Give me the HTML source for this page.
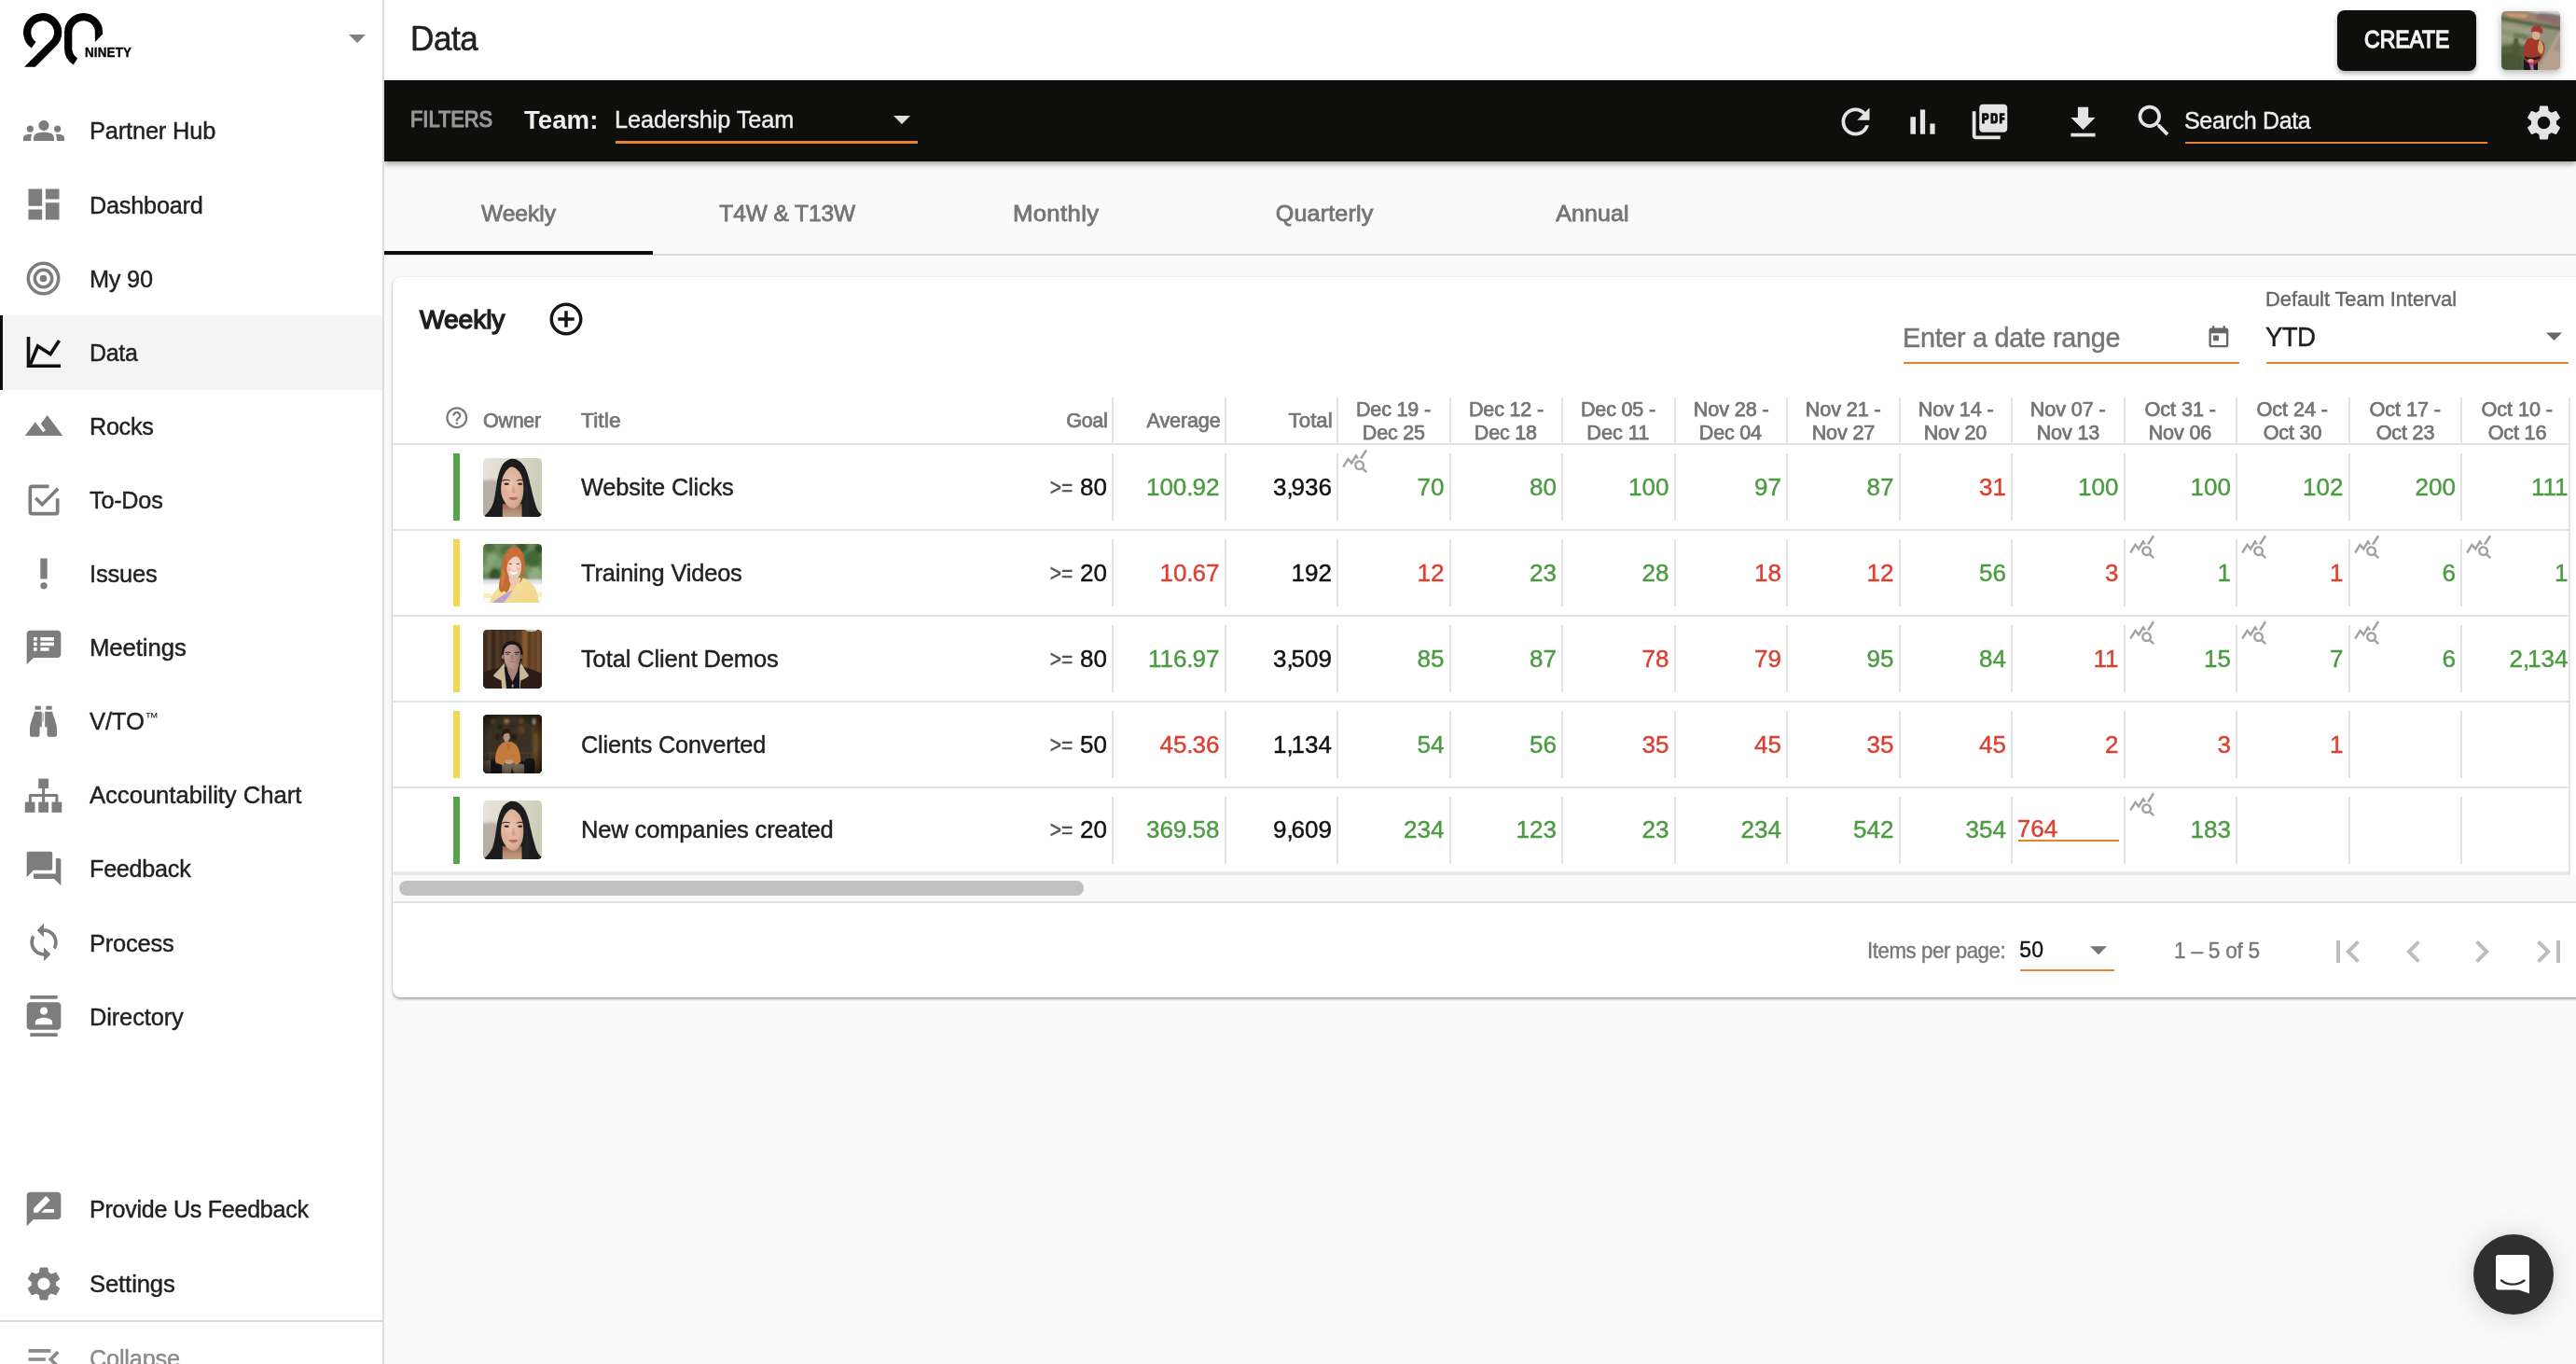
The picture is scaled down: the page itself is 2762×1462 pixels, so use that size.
<!DOCTYPE html>
<html><head><meta charset="utf-8"><title>Data</title><style>
html,body{margin:0;padding:0}
html{overflow:hidden;background:#fafafa}
body{width:2762px;height:1462px;overflow:hidden;background:#fafafa;position:relative;font-family:"Liberation Sans",sans-serif;}
.b,.t,.ic{position:absolute;display:block}
.t{white-space:nowrap;overflow:visible;will-change:opacity;opacity:.999}
</style></head>
<body>
<div class="b" style="left:412px;top:0px;width:2350px;height:86px;background:#fff;"></div>
<div class="b" style="left:412px;top:173px;width:2350px;height:100px;background:#fafafa;"></div>
<div class="b" style="left:412px;top:271.5px;width:2350px;height:2px;background:#dcdcdc;"></div>
<div class="b" style="left:412px;top:269px;width:288px;height:4px;background:#0e0e0e;"></div>
<div class="b" style="left:412px;top:86px;width:2350px;height:87px;background:#0e0e0d;box-shadow:0 3px 6px rgba(0,0,0,.35);"></div>
<div class="t " style="top:17.99px;height:47px;line-height:47px;font-size:36px;color:#212121;-webkit-text-stroke:0.58px;left:440.38px;"><span style="letter-spacing: -0.379px; display: inline-block; transform: scaleX(0.9718); transform-origin: 0% 50%;">Data</span></div>
<div class="b" style="left:2506px;top:11px;width:149px;height:64.5px;background:#0e0e0d;border-radius:8px;box-shadow:0 3px 5px rgba(0,0,0,.3);"></div>
<div class="t " style="top:25.28px;height:34px;line-height:34px;font-size:26px;color:#f4f4f4;-webkit-text-stroke:1.30px #f4f4f4;left:2281.00px;width:600px;text-align:center;"><span style="letter-spacing: 0px; display: inline-block; transform: scaleX(0.8819); transform-origin: 50% 50%;">CREATE</span></div>
<svg class="ic" style="left:2682px;top:12.4px;width:63px;height:63px;filter:drop-shadow(0 3px 4px rgba(0,0,0,.3));" viewBox="0 0 100 100"><defs><clipPath id="cpuser268212"><rect width="100" height="100" rx="8"></rect></clipPath><filter id="b0user268212" x="-30%" y="-30%" width="160%" height="160%"><feGaussianBlur stdDeviation="0.7"></feGaussianBlur></filter><filter id="b1user268212" x="-30%" y="-30%" width="160%" height="160%"><feGaussianBlur stdDeviation="1.3"></feGaussianBlur></filter><filter id="b2user268212" x="-30%" y="-30%" width="160%" height="160%"><feGaussianBlur stdDeviation="2.6"></feGaussianBlur></filter><filter id="b3user268212" x="-30%" y="-30%" width="160%" height="160%"><feGaussianBlur stdDeviation="4.5"></feGaussianBlur></filter></defs><g clip-path="url(#cpuser268212)"><rect width="100" height="100" fill="#8f9478"></rect><g filter="url(#b1user268212)"><path d="M38 -2 L102 -2 L102 8 L70 5Z" fill="#cddaeb"></path><path d="M-2 1 C20 -1 40 0 60 3 C72 1 88 3 102 7 L102 26 C80 24 60 20 40 17 C24 14 10 10 -2 8Z" fill="#9c8270"></path><path d="M4 3 L46 5 L40 11 L16 10Z" fill="#c9a06c"></path><path d="M60 5 C74 3 90 6 102 9 L102 24 C88 22 74 18 60 14Z" fill="#86706c"></path><path d="M-2 8 C30 14 60 21 102 26 L102 33 C70 28 30 21 -2 15Z" fill="#5a684c"></path><path d="M-2 22 C20 24 40 30 60 32 L60 40 C40 38 20 32 -2 30Z" fill="#a2a386" opacity=".8"></path><path d="M20 38 C30 36 40 38 48 44 L40 50 C32 46 26 44 20 44Z" fill="#6e7a58"></path><path d="M-2 40 C20 42 40 48 52 54 L52 60 C36 54 18 50 -2 48Z" fill="#a0a286" opacity=".7"></path></g><g filter="url(#b2user268212)"><path d="M-2 60 C14 54 30 55 42 60 L46 102 L-2 102Z" fill="#54613e"></path><path d="M-2 76 C10 70 24 72 36 78 L36 102 L-2 102Z" fill="#4a5636"></path></g><g filter="url(#b1user268212)"><path d="M22 45 L28 45 L30 60 L34 72 L28 70 L28 102 L22 102 L22 70 L16 74 L20 60Z" fill="#4c5836"></path><path d="M102 32 C94 40 86 54 80 68 C72 82 64 92 60 102 L102 102Z" fill="#b8a08f"></path><path d="M102 40 C96 50 92 58 88 66 L102 70Z" fill="#a89080"></path></g><g filter="url(#b0user268212)"><path d="M38 82 L62 80 L62 101 L38 101Z" fill="#16161b"></path><path d="M46 46 C40 52 37 62 38 72 C38 78 40 84 42 86 L50 90 L58 90 L66 84 C72 76 76 64 73 56 C70 48 54 44 46 46Z" fill="#a3382a"></path><path d="M40 76 C46 80 56 80 66 76 L66 80 C56 84 46 84 40 80Z" fill="#1a1a1e"></path><path d="M65 49 C72 54 73 64 70 72 C66 74 62 70 62 64 C62 58 63 53 65 49Z" fill="#c9a56c"></path><ellipse cx="59" cy="41" rx="6.800" ry="8" fill="#dbab92"></ellipse><path d="M50.500 34 C51 26 58 23 64 25 C69 27 71 32 70 37 C68 39 66 37 64 36 C60 34 55 34 51 36Z" fill="#a0383c"></path><path d="M46 84 L50 101 L56 101 L54 84Z" fill="#c43890"></path><path d="M50 92 L52 101 L54 101 L53 92Z" fill="#58b070"></path><ellipse cx="50" cy="84" rx="5" ry="3" fill="#d4a288"></ellipse></g></g></svg>
<div class="t " style="top:113.39px;height:31px;line-height:31px;font-size:23.5px;color:#9a9a9a;-webkit-text-stroke:1.18px #9a9a9a;left:440.44px;"><span style="letter-spacing: 0px; display: inline-block; transform: scaleX(0.9292); transform-origin: 0% 50%;">FILTERS</span></div>
<div class="t " style="top:110.85px;height:36px;line-height:36px;font-size:27.5px;color:#efefef;font-weight:700;left:562.06px;"><span style="letter-spacing: 0.036px; display: inline-block; transform: scaleX(1.0033); transform-origin: 0% 50%;">Team:</span></div>
<div class="t " style="top:111.92px;height:33px;line-height:33px;font-size:25.5px;color:#efefef;-webkit-text-stroke:0.41px;left:658.85px;"><span style="letter-spacing: -0.072px; display: inline-block; transform: scaleX(0.9903); transform-origin: 0% 50%;">Leadership Team</span></div>
<div class="b" style="left:660px;top:151.2px;width:324px;height:2.6px;background:#e8832b;"></div>
<svg class="ic" style="left:957.5px;top:123.800px;width:18px;height:9.200px" viewBox="0 0 18 9"><path d="M0 0H18L9 9Z" fill="#ddd"></path></svg>
<svg class="ic" style="left:1966.9px;top:107.69999999999999px;width:45px;height:45px" viewBox="0 0 24 24"><path fill="#e4e4e4" d="M17.65 6.35C16.2 4.9 14.21 4 12 4c-4.42 0-7.99 3.58-7.99 8s3.57 8 7.99 8c3.73 0 6.84-2.55 7.73-6h-2.08c-.82 2.33-3.04 4-5.65 4-3.31 0-6-2.69-6-6s2.690-6 6-6c1.66 0 3.14.69 4.22 1.78L13 11h7V4l-2.35 2.35z"></path></svg>
<svg class="ic" style="left:2038.9px;top:107.69999999999999px;width:45px;height:45px" viewBox="0 0 24 24"><path fill="#e4e4e4" d="M5 9.2h3V19H5zM10.6 5h2.8v14h-2.8zm5.6 8H19v6h-2.8z"></path></svg>
<svg class="ic" style="left:2110.9px;top:108.4px;width:45px;height:45px" viewBox="0 0 24 24"><path fill="#e4e4e4" d="M20 2H8c-1.1 0-2 .9-2 2v12c0 1.1.9 2 2 2h12c1.1 0 2-.9 2-2V4c0-1.1-.9-2-2-2zm-8.5 7.500c0 .83-.67 1.5-1.5 1.5H9v2H7.5V7H10c.83 0 1.5.67 1.5 1.5v1zm5 2c0 .83-.67 1.5-1.5 1.5h-2.5V7H15c.83 0 1.5.67 1.5 1.5v3zm4-3H19v1h1.5V11H19v2h-1.5V7h3v1.5zM9 9.500h1v-1H9v1zM4 6H2v14c0 1.1.9 2 2 2h14v-2H4V6zm10 5.500h1v-3h-1v3z"></path></svg>
<svg class="ic" style="left:2211.3px;top:108.8px;width:45px;height:45px" viewBox="0 0 24 24"><path fill="#e4e4e4" d="M19 9h-4V3H9v6H5l7 7 7-7zM5 18v2h14v-2H5z"></path></svg>
<svg class="ic" style="left:2287.4px;top:107.39999999999999px;width:45px;height:45px" viewBox="0 0 24 24"><path fill="#e4e4e4" d="M15.5 14h-.79l-.28-.27C15.41 12.59 16 11.11 16 9.500 16 5.910 13.090 3 9.500 3S3 5.910 3 9.500 5.910 16 9.500 16c1.61 0 3.09-.59 4.23-1.57l.27.28v.79l5 4.990L20.490 19l-4.990-5zm-6 0C7.010 14 5 11.990 5 9.500S7.010 5 9.500 5 14 7.010 14 9.500 11.990 14 9.500 14z"></path></svg>
<svg class="ic" style="left:2705.3px;top:108.69999999999999px;width:45px;height:45px" viewBox="0 0 24 24"><path fill="#e4e4e4" d="M19.14 12.94c.04-.3.06-.61.06-.94 0-.32-.02-.64-.07-.94l2.03-1.58c.18-.14.23-.41.12-.61l-1.92-3.32c-.12-.22-.37-.29-.59-.22l-2.39.96c-.5-.38-1.03-.7-1.62-.94l-.36-2.54c-.04-.24-.24-.41-.48-.41h-3.84c-.24 0-.43.17-.47.41l-.36 2.54c-.59.24-1.13.57-1.62.94l-2.39-.96c-.22-.08-.47 0-.59.22L2.74 8.87c-.12.21-.08.47.12.61l2.03 1.58c-.05.3-.09.63-.09.94s.02.64.07.94l-2.03 1.58c-.18.14-.23.41-.12.61l1.92 3.32c.12.22.37.29.59.22l2.39-.96c.5.38 1.03.7 1.62.94l.36 2.54c.05.24.24.41.48.41h3.84c.24 0 .44-.17.47-.41l.36-2.54c.59-.24 1.13-.56 1.62-.94l2.39.96c.22.08.47 0 .59-.22l1.92-3.32c.12-.22.07-.47-.12-.61l-2.01-1.58zM12 15.6c-1.98 0-3.6-1.62-3.6-3.6s1.62-3.6 3.6-3.6 3.6 1.62 3.6 3.6-1.62 3.6-3.6 3.6z"></path></svg>
<div class="t " style="top:112.24px;height:34px;line-height:34px;font-size:26.5px;color:#efefef;-webkit-text-stroke:0.42px;left:2342.21px;"><span style="letter-spacing: -0.402px; display: inline-block; transform: scaleX(0.9479); transform-origin: 0% 50%;">Search Data</span></div>
<div class="b" style="left:2343.4px;top:152.3px;width:323.6px;height:2.2px;background:#e8832b;"></div>
<div class="t " style="top:213.15px;height:32px;line-height:32px;font-size:24.5px;color:#757575;-webkit-text-stroke:0.83px #757575;left:256.00px;width:600px;text-align:center;"><span style="letter-spacing: 0.023px; display: inline-block; transform: scaleX(1.0027); transform-origin: 50% 50%;">Weekly</span></div>
<div class="t " style="top:213.15px;height:32px;line-height:32px;font-size:24.5px;color:#757575;-webkit-text-stroke:0.83px #757575;left:544.00px;width:600px;text-align:center;"><span style="letter-spacing: -0.033px; display: inline-block; transform: scaleX(0.9962); transform-origin: 50% 50%;">T4W &amp; T13W</span></div>
<div class="t " style="top:213.15px;height:32px;line-height:32px;font-size:24.5px;color:#757575;-webkit-text-stroke:0.83px #757575;left:832.00px;width:600px;text-align:center;"><span style="letter-spacing: 0.375px; display: inline-block; transform: scaleX(1.0475); transform-origin: 50% 50%;">Monthly</span></div>
<div class="t " style="top:213.15px;height:32px;line-height:32px;font-size:24.5px;color:#757575;-webkit-text-stroke:0.83px #757575;left:1120.00px;width:600px;text-align:center;"><span style="letter-spacing: 0.162px; display: inline-block; transform: scaleX(1.0236); transform-origin: 50% 50%;">Quarterly</span></div>
<div class="t " style="top:213.15px;height:32px;line-height:32px;font-size:24.5px;color:#757575;-webkit-text-stroke:0.83px #757575;left:1407.75px;width:600px;text-align:center;"><span style="letter-spacing: 0.135px; display: inline-block; transform: scaleX(1.0163); transform-origin: 50% 50%;">Annual</span></div>
<div class="b" style="left:421px;top:296.7px;width:2360px;height:772.3px;background:#fff;border-radius:8px;box-shadow:0 2px 3px rgba(0,0,0,.32),0 0 2px rgba(0,0,0,.12);"></div>
<div class="t " style="top:323.77px;height:37px;line-height:37px;font-size:28.5px;color:#1f1f1f;-webkit-text-stroke:1.43px #1f1f1f;left:450.02px;"><span style="letter-spacing: -0.105px; display: inline-block; transform: scaleX(0.9895); transform-origin: 0% 50%;">Weekly</span></div>
<svg class="ic" style="left:585.5px;top:320.5px;width:42px;height:42px" viewBox="0 0 24 24"><path fill="#151515" d="M13 7h-2v4H7v2h4v4h2v-4h4v-2h-4V7zm-1-5C6.480 2 2 6.480 2 12s4.480 10 10 10 10-4.480 10-10S17.520 2 12 2zm0 18c-4.410 0-8-3.590-8-8s3.590-8 8-8 8 3.590 8 8-3.590 8-8 8z"></path></svg>
<div class="t " style="top:342.00px;height:39px;line-height:39px;font-size:30px;color:#767676;-webkit-text-stroke:0.48px;left:2039.65px;"><span style="letter-spacing: -0.309px; display: inline-block; transform: scaleX(0.9599); transform-origin: 0% 50%;">Enter a date range</span></div>
<div class="b" style="left:2041px;top:388px;width:359.5px;height:2.2px;background:#e8832b;"></div>
<svg class="ic" style="left:2365.2999999999997px;top:347.843px;width:27.8px;height:27.8px" viewBox="0 0 24 24"><path fill="#666" d="M19 3h-1V1h-2v2H8V1H6v2H5c-1.110 0-1.990.9-1.990 2L3 19c0 1.100.890 2 2 2h14c1.100 0 2-.9 2-2V5c0-1.100-.9-2-2-2zm0 16H5V8h14v11zM7 10h5v5H7z"></path></svg>
<div class="t " style="top:306.37px;height:29px;line-height:29px;font-size:22.5px;color:#666;-webkit-text-stroke:0.36px;left:2428.99px;"><span style="letter-spacing: -0.124px; display: inline-block; transform: scaleX(0.9781); transform-origin: 0% 50%;">Default Team Interval</span></div>
<div class="t " style="top:341.98px;height:38px;line-height:38px;font-size:29px;color:#1f1f1f;-webkit-text-stroke:0.46px;left:2428.70px;"><span style="letter-spacing: -0.709px; display: inline-block; transform: scaleX(0.9535); transform-origin: 0% 50%;">YTD</span></div>
<div class="b" style="left:2430px;top:388px;width:324px;height:2.2px;background:#e8832b;"></div>
<svg class="ic" style="left:2729.500px;top:355.500px;width:17px;height:9.500px" viewBox="0 0 18 9"><path d="M0 0H18L9 9Z" fill="#666"></path></svg>
<svg class="ic" style="left:475.7px;top:434.2px;width:27.6px;height:27.6px" viewBox="0 0 24 24"><path fill="#7a7a7a" d="M11 18h2v-2h-2v2zm1-16C6.480 2 2 6.480 2 12s4.480 10 10 10 10-4.480 10-10S17.520 2 12 2zm0 18c-4.410 0-8-3.590-8-8s3.590-8 8-8 8 3.590 8 8-3.590 8-8 8zm0-14c-2.210 0-4 1.790-4 4h2c0-1.100.9-2 2-2s2 .9 2 2c0 2-3 1.750-3 5h2c0-2.250 3-2.500 3-5 0-2.210-1.790-4-4-4z"></path></svg>
<div class="t " style="top:436.36px;height:29px;line-height:29px;font-size:22px;color:#757575;-webkit-text-stroke:0.75px #757575;left:518.01px;"><span style="letter-spacing: -0.236px; display: inline-block; transform: scaleX(0.9725); transform-origin: 0% 50%;">Owner</span></div>
<div class="t " style="top:436.36px;height:29px;line-height:29px;font-size:22px;color:#757575;-webkit-text-stroke:0.75px #757575;left:623.01px;"><span style="letter-spacing: 0.162px; display: inline-block; transform: scaleX(1.029); transform-origin: 0% 50%;">Title</span></div>
<div class="t " style="top:436.36px;height:29px;line-height:29px;font-size:22px;color:#757575;-webkit-text-stroke:0.75px #757575;left:588.00px;width:600px;text-align:right;"><span style="letter-spacing: -0.22px; display: inline-block; transform: scaleX(0.9733); transform-origin: 100% 50%;">Goal</span></div>
<div class="t " style="top:436.36px;height:29px;line-height:29px;font-size:22px;color:#757575;-webkit-text-stroke:0.75px #757575;left:708.50px;width:600px;text-align:right;"><span style="letter-spacing: -0.143px; display: inline-block; transform: scaleX(0.9803); transform-origin: 100% 50%;">Average</span></div>
<div class="t " style="top:436.36px;height:29px;line-height:29px;font-size:22px;color:#757575;-webkit-text-stroke:0.75px #757575;left:828.50px;width:600px;text-align:right;"><span style="letter-spacing: 0.054px; display: inline-block; transform: scaleX(1.0086); transform-origin: 100% 50%;">Total</span></div>
<div class="t dh" style="top:424.36px;height:29px;line-height:29px;font-size:22px;color:#757575;-webkit-text-stroke:0.75px #757575;left:1194.25px;width:600px;text-align:center;"><span style="letter-spacing: -0.153px; display: inline-block; transform: scaleX(0.9758); transform-origin: 50% 50%;">Dec 19 -</span></div>
<div class="t dh" style="top:449.36px;height:29px;line-height:29px;font-size:22px;color:#757575;-webkit-text-stroke:0.75px #757575;left:1194.25px;width:600px;text-align:center;"><span style="letter-spacing: -0.183px; display: inline-block; transform: scaleX(0.9753); transform-origin: 50% 50%;">Dec 25</span></div>
<div class="t dh" style="top:424.36px;height:29px;line-height:29px;font-size:22px;color:#757575;-webkit-text-stroke:0.75px #757575;left:1314.75px;width:600px;text-align:center;"><span style="letter-spacing: -0.153px; display: inline-block; transform: scaleX(0.9758); transform-origin: 50% 50%;">Dec 12 -</span></div>
<div class="t dh" style="top:449.36px;height:29px;line-height:29px;font-size:22px;color:#757575;-webkit-text-stroke:0.75px #757575;left:1314.75px;width:600px;text-align:center;"><span style="letter-spacing: -0.183px; display: inline-block; transform: scaleX(0.9753); transform-origin: 50% 50%;">Dec 18</span></div>
<div class="t dh" style="top:424.36px;height:29px;line-height:29px;font-size:22px;color:#757575;-webkit-text-stroke:0.75px #757575;left:1435.25px;width:600px;text-align:center;"><span style="letter-spacing: -0.153px; display: inline-block; transform: scaleX(0.9758); transform-origin: 50% 50%;">Dec 05 -</span></div>
<div class="t dh" style="top:449.36px;height:29px;line-height:29px;font-size:22px;color:#757575;-webkit-text-stroke:0.75px #757575;left:1435.25px;width:600px;text-align:center;"><span style="letter-spacing: -0.068px; display: inline-block; transform: scaleX(0.9906); transform-origin: 50% 50%;">Dec 11</span></div>
<div class="t dh" style="top:424.36px;height:29px;line-height:29px;font-size:22px;color:#757575;-webkit-text-stroke:0.75px #757575;left:1555.75px;width:600px;text-align:center;"><span style="letter-spacing: -0.103px; display: inline-block; transform: scaleX(0.9838); transform-origin: 50% 50%;">Nov 28 -</span></div>
<div class="t dh" style="top:449.36px;height:29px;line-height:29px;font-size:22px;color:#757575;-webkit-text-stroke:0.75px #757575;left:1555.75px;width:600px;text-align:center;"><span style="letter-spacing: -0.183px; display: inline-block; transform: scaleX(0.9753); transform-origin: 50% 50%;">Dec 04</span></div>
<div class="t dh" style="top:424.36px;height:29px;line-height:29px;font-size:22px;color:#757575;-webkit-text-stroke:0.75px #757575;left:1676.25px;width:600px;text-align:center;"><span style="letter-spacing: -0.103px; display: inline-block; transform: scaleX(0.9838); transform-origin: 50% 50%;">Nov 21 -</span></div>
<div class="t dh" style="top:449.36px;height:29px;line-height:29px;font-size:22px;color:#757575;-webkit-text-stroke:0.75px #757575;left:1676.25px;width:600px;text-align:center;"><span style="letter-spacing: -0.148px; display: inline-block; transform: scaleX(0.98); transform-origin: 50% 50%;">Nov 27</span></div>
<div class="t dh" style="top:424.36px;height:29px;line-height:29px;font-size:22px;color:#757575;-webkit-text-stroke:0.75px #757575;left:1796.75px;width:600px;text-align:center;"><span style="letter-spacing: -0.103px; display: inline-block; transform: scaleX(0.9838); transform-origin: 50% 50%;">Nov 14 -</span></div>
<div class="t dh" style="top:449.36px;height:29px;line-height:29px;font-size:22px;color:#757575;-webkit-text-stroke:0.75px #757575;left:1796.75px;width:600px;text-align:center;"><span style="letter-spacing: -0.148px; display: inline-block; transform: scaleX(0.98); transform-origin: 50% 50%;">Nov 20</span></div>
<div class="t dh" style="top:424.36px;height:29px;line-height:29px;font-size:22px;color:#757575;-webkit-text-stroke:0.75px #757575;left:1917.25px;width:600px;text-align:center;"><span style="letter-spacing: -0.103px; display: inline-block; transform: scaleX(0.9838); transform-origin: 50% 50%;">Nov 07 -</span></div>
<div class="t dh" style="top:449.36px;height:29px;line-height:29px;font-size:22px;color:#757575;-webkit-text-stroke:0.75px #757575;left:1917.25px;width:600px;text-align:center;"><span style="letter-spacing: -0.148px; display: inline-block; transform: scaleX(0.98); transform-origin: 50% 50%;">Nov 13</span></div>
<div class="t dh" style="top:424.36px;height:29px;line-height:29px;font-size:22px;color:#757575;-webkit-text-stroke:0.75px #757575;left:2037.75px;width:600px;text-align:center;"><span style="letter-spacing: -0.093px; display: inline-block; transform: scaleX(0.9845); transform-origin: 50% 50%;">Oct 31 -</span></div>
<div class="t dh" style="top:449.36px;height:29px;line-height:29px;font-size:22px;color:#757575;-webkit-text-stroke:0.75px #757575;left:2037.75px;width:600px;text-align:center;"><span style="letter-spacing: -0.148px; display: inline-block; transform: scaleX(0.98); transform-origin: 50% 50%;">Nov 06</span></div>
<div class="t dh" style="top:424.36px;height:29px;line-height:29px;font-size:22px;color:#757575;-webkit-text-stroke:0.75px #757575;left:2158.25px;width:600px;text-align:center;"><span style="letter-spacing: -0.093px; display: inline-block; transform: scaleX(0.9845); transform-origin: 50% 50%;">Oct 24 -</span></div>
<div class="t dh" style="top:449.36px;height:29px;line-height:29px;font-size:22px;color:#757575;-webkit-text-stroke:0.75px #757575;left:2158.25px;width:600px;text-align:center;"><span style="letter-spacing: -0.141px; display: inline-block; transform: scaleX(0.9796); transform-origin: 50% 50%;">Oct 30</span></div>
<div class="t dh" style="top:424.36px;height:29px;line-height:29px;font-size:22px;color:#757575;-webkit-text-stroke:0.75px #757575;left:2278.75px;width:600px;text-align:center;"><span style="letter-spacing: -0.093px; display: inline-block; transform: scaleX(0.9845); transform-origin: 50% 50%;">Oct 17 -</span></div>
<div class="t dh" style="top:449.36px;height:29px;line-height:29px;font-size:22px;color:#757575;-webkit-text-stroke:0.75px #757575;left:2278.75px;width:600px;text-align:center;"><span style="letter-spacing: -0.141px; display: inline-block; transform: scaleX(0.9796); transform-origin: 50% 50%;">Oct 23</span></div>
<div class="t dh" style="top:424.36px;height:29px;line-height:29px;font-size:22px;color:#757575;-webkit-text-stroke:0.75px #757575;left:2399.25px;width:600px;text-align:center;"><span style="letter-spacing: -0.093px; display: inline-block; transform: scaleX(0.9845); transform-origin: 50% 50%;">Oct 10 -</span></div>
<div class="t dh" style="top:449.36px;height:29px;line-height:29px;font-size:22px;color:#757575;-webkit-text-stroke:0.75px #757575;left:2399.25px;width:600px;text-align:center;"><span style="letter-spacing: -0.141px; display: inline-block; transform: scaleX(0.9796); transform-origin: 50% 50%;">Oct 16</span></div>
<div class="b" style="left:1192.0px;top:426px;width:2px;height:49px;background:#e2e2e2;"></div>
<div class="b" style="left:1312.5px;top:426px;width:2px;height:49px;background:#e2e2e2;"></div>
<div class="b" style="left:1433.0px;top:426px;width:2px;height:49px;background:#e2e2e2;"></div>
<div class="b" style="left:1553.5px;top:426px;width:2px;height:49px;background:#e2e2e2;"></div>
<div class="b" style="left:1674.0px;top:426px;width:2px;height:49px;background:#e2e2e2;"></div>
<div class="b" style="left:1794.5px;top:426px;width:2px;height:49px;background:#e2e2e2;"></div>
<div class="b" style="left:1915.0px;top:426px;width:2px;height:49px;background:#e2e2e2;"></div>
<div class="b" style="left:2035.5px;top:426px;width:2px;height:49px;background:#e2e2e2;"></div>
<div class="b" style="left:2156.0px;top:426px;width:2px;height:49px;background:#e2e2e2;"></div>
<div class="b" style="left:2276.5px;top:426px;width:2px;height:49px;background:#e2e2e2;"></div>
<div class="b" style="left:2397.0px;top:426px;width:2px;height:49px;background:#e2e2e2;"></div>
<div class="b" style="left:2517.5px;top:426px;width:2px;height:49px;background:#e2e2e2;"></div>
<div class="b" style="left:2638.0px;top:426px;width:2px;height:49px;background:#e2e2e2;"></div>
<div class="b" style="left:421px;top:475px;width:2334px;height:2.2px;background:#e2e2e2;"></div>
<div class="b" style="left:421px;top:567px;width:2334px;height:2.2px;background:#e2e2e2;"></div>
<div class="b" style="left:421px;top:659px;width:2334px;height:2.2px;background:#e2e2e2;"></div>
<div class="b" style="left:421px;top:751px;width:2334px;height:2.2px;background:#e2e2e2;"></div>
<div class="b" style="left:421px;top:843px;width:2334px;height:2.2px;background:#e2e2e2;"></div>
<div class="b" style="left:421px;top:933.5px;width:2335px;height:4px;background:#e9e9e9;"></div>
<div class="b" style="left:2753.6px;top:426px;width:2.2px;height:511px;background:#e4e4e4;"></div>
<div class="b" style="left:421px;top:937.5px;width:2341px;height:28px;background:#fafafa;"></div>
<div class="b" style="left:427.5px;top:944px;width:734px;height:16px;background:#c1c1c1;border-radius:8px;"></div>
<div class="b" style="left:421px;top:965.5px;width:2341px;height:2.2px;background:#e2e2e2;"></div>
<div class="b" style="left:486px;top:486px;width:7px;height:71.5px;background:#5aa04f;"></div>
<svg class="ic" style="left:518px;top:491px;width:63px;height:63px;" viewBox="0 0 100 100"><defs><clipPath id="cpw1518491"><rect width="100" height="100" rx="7"></rect></clipPath><filter id="b0w1518491" x="-30%" y="-30%" width="160%" height="160%"><feGaussianBlur stdDeviation="0.7"></feGaussianBlur></filter><filter id="b1w1518491" x="-30%" y="-30%" width="160%" height="160%"><feGaussianBlur stdDeviation="1.3"></feGaussianBlur></filter><filter id="b2w1518491" x="-30%" y="-30%" width="160%" height="160%"><feGaussianBlur stdDeviation="2.6"></feGaussianBlur></filter><filter id="b3w1518491" x="-30%" y="-30%" width="160%" height="160%"><feGaussianBlur stdDeviation="4.5"></feGaussianBlur></filter><linearGradient id="w1gw1518491" x1="0" y1="0" x2="1" y2="0.2"><stop offset="0" stop-color="#e7e3d9"></stop><stop offset=".55" stop-color="#dcdacb"></stop><stop offset="1" stop-color="#cccdb9"></stop></linearGradient><radialGradient id="w1fw1518491" cx=".42" cy=".45" r=".65"><stop offset="0" stop-color="#ecc3ab"></stop><stop offset=".7" stop-color="#dcb098"></stop><stop offset="1" stop-color="#c29880"></stop></radialGradient><linearGradient id="w1nw1518491" x1="0" y1="0" x2="0" y2="1"><stop offset="0" stop-color="#8e6650"></stop><stop offset=".5" stop-color="#b48a72"></stop><stop offset="1" stop-color="#c4a084"></stop></linearGradient></defs><g clip-path="url(#cpw1518491)"><rect width="100" height="100" fill="url(#w1gw1518491)"></rect><path d="M-5 40 Q12 34 30 40 L28 105 L-5 105Z" fill="#b9aea6" filter="url(#b2w1518491)"></path><g filter="url(#b0w1518491)"><path d="M50 1 C44 1 38 5 34 10 C29 17 26 28 24 38 C22 50 21 62 18 74 C16 82 12 89 6 95 C4 97 2 98 0 100 L101 100 L101 97 C96 94 92 88 90 82 C86 70 83 56 80 44 C78 34 75 22 70 14 C65 6 58 1 50 1Z" fill="#1a1a1e"></path><path d="M33 78 L33 101 L66 101 L66 78Z" fill="url(#w1nw1518491)"></path><path d="M47 15 C42 17 37 24 34 31 C32 36 31 42 30.500 48 C30 56 31 63 34 70 C37 77 42 82 47 84.500 C50 86 53 86 56 84.500 C61 82 65 75 67 68 C69 61 69 52 68.500 45 C68 38 66 30 62 24 C58 19 52 14 47 15Z" fill="url(#w1fw1518491)"></path><ellipse cx="38" cy="59" rx="7" ry="6" fill="#e8a090" opacity=".45" filter="url(#b1w1518491)"></ellipse><path d="M32 38 Q38 34.500 46 37.500 L46 38.800 Q38 36.500 32.500 39.500Z" fill="#2a2220"></path><path d="M57 38 Q63 34.500 68.500 37 L68.500 38.500 Q63 36.500 57 39.300Z" fill="#2a2220"></path><ellipse cx="40" cy="44" rx="4.300" ry="1.900" fill="#3a2c28"></ellipse><ellipse cx="63" cy="44" rx="4" ry="1.900" fill="#3a2c28"></ellipse><path d="M50.500 47 L48 58 Q51.500 61.500 55.500 58.500 Q53 55 52.500 47Z" fill="#c99880" opacity=".75"></path><path d="M43 68 Q47 65.500 51.500 66.800 Q56 65.500 60 68 Q56 72 51.500 72 Q47 72 43 68Z" fill="#b46e68"></path><path d="M68 30 C72 44 74 60 70 78 C69 84 68 92 68 100 L78 100 C78 80 80 50 68 30Z" fill="#25252b" opacity=".8"></path></g></g></svg>
<div class="t rt" style="top:505.43px;height:34px;line-height:34px;font-size:26px;color:#212121;-webkit-text-stroke:0.42px;left:622.83px;"><span style="letter-spacing: -0.167px; display: inline-block; transform: scaleX(0.9759); transform-origin: 0% 50%;">Website Clicks</span></div>
<div class="t " style="top:505.43px;height:34px;line-height:34px;font-size:26px;color:#111;-webkit-text-stroke:0.42px;left:587.00px;width:600px;text-align:right;"><span><span style="color:#555;display:inline-block;transform:scaleX(.81);transform-origin:100% 50%">&gt;=</span> 80</span></div>
<div class="t " style="top:505.43px;height:34px;line-height:34px;font-size:26px;color:#4b9b41;-webkit-text-stroke:0.42px;left:707.50px;width:600px;text-align:right;"><span>100<span style="letter-spacing:-1px">.</span>92</span></div>
<div class="t " style="top:505.43px;height:34px;line-height:34px;font-size:26px;color:#111;-webkit-text-stroke:0.42px;left:828.00px;width:600px;text-align:right;"><span>3<span style="letter-spacing:-2px">,</span>936</span></div>
<div class="b" style="left:1192.0px;top:486px;width:2px;height:72px;background:#e2e2e2;"></div>
<div class="b" style="left:1312.5px;top:486px;width:2px;height:72px;background:#e2e2e2;"></div>
<div class="b" style="left:1433.0px;top:486px;width:2px;height:72px;background:#e2e2e2;"></div>
<div class="b" style="left:1553.5px;top:486px;width:2px;height:72px;background:#e2e2e2;"></div>
<div class="b" style="left:1674.0px;top:486px;width:2px;height:72px;background:#e2e2e2;"></div>
<div class="b" style="left:1794.5px;top:486px;width:2px;height:72px;background:#e2e2e2;"></div>
<div class="b" style="left:1915.0px;top:486px;width:2px;height:72px;background:#e2e2e2;"></div>
<div class="b" style="left:2035.5px;top:486px;width:2px;height:72px;background:#e2e2e2;"></div>
<div class="b" style="left:2156.0px;top:486px;width:2px;height:72px;background:#e2e2e2;"></div>
<div class="b" style="left:2276.5px;top:486px;width:2px;height:72px;background:#e2e2e2;"></div>
<div class="b" style="left:2397.0px;top:486px;width:2px;height:72px;background:#e2e2e2;"></div>
<div class="b" style="left:2517.5px;top:486px;width:2px;height:72px;background:#e2e2e2;"></div>
<div class="b" style="left:2638.0px;top:486px;width:2px;height:72px;background:#e2e2e2;"></div>
<div class="t " style="top:505.43px;height:34px;line-height:34px;font-size:26px;color:#4b9b41;-webkit-text-stroke:0.42px;left:948.50px;width:600px;text-align:right;"><span>70</span></div>
<div class="t " style="top:505.43px;height:34px;line-height:34px;font-size:26px;color:#4b9b41;-webkit-text-stroke:0.42px;left:1069.00px;width:600px;text-align:right;"><span>80</span></div>
<div class="t " style="top:505.43px;height:34px;line-height:34px;font-size:26px;color:#4b9b41;-webkit-text-stroke:0.42px;left:1189.50px;width:600px;text-align:right;"><span>100</span></div>
<div class="t " style="top:505.43px;height:34px;line-height:34px;font-size:26px;color:#4b9b41;-webkit-text-stroke:0.42px;left:1310.00px;width:600px;text-align:right;"><span>97</span></div>
<div class="t " style="top:505.43px;height:34px;line-height:34px;font-size:26px;color:#4b9b41;-webkit-text-stroke:0.42px;left:1430.50px;width:600px;text-align:right;"><span>87</span></div>
<div class="t " style="top:505.43px;height:34px;line-height:34px;font-size:26px;color:#db4031;-webkit-text-stroke:0.42px;left:1551.00px;width:600px;text-align:right;"><span>31</span></div>
<div class="t " style="top:505.43px;height:34px;line-height:34px;font-size:26px;color:#4b9b41;-webkit-text-stroke:0.42px;left:1671.50px;width:600px;text-align:right;"><span>100</span></div>
<div class="t " style="top:505.43px;height:34px;line-height:34px;font-size:26px;color:#4b9b41;-webkit-text-stroke:0.42px;left:1792.00px;width:600px;text-align:right;"><span>100</span></div>
<div class="t " style="top:505.43px;height:34px;line-height:34px;font-size:26px;color:#4b9b41;-webkit-text-stroke:0.42px;left:1912.50px;width:600px;text-align:right;"><span>102</span></div>
<div class="t " style="top:505.43px;height:34px;line-height:34px;font-size:26px;color:#4b9b41;-webkit-text-stroke:0.42px;left:2033.00px;width:600px;text-align:right;"><span>200</span></div>
<div class="t " style="top:505.43px;height:34px;line-height:34px;font-size:26px;color:#4b9b41;-webkit-text-stroke:0.42px;left:2153.50px;width:600px;text-align:right;"><span>111</span></div>
<svg class="ic" style="left:1438.0px;top:479.2px;width:29.3px;height:29.3px" viewBox="0 0 24 24"><path fill="#a2a2a2" d="M19.880 18.470c.44-.7.7-1.510.7-2.390 0-2.490-2.010-4.500-4.500-4.500s-4.500 2.010-4.500 4.500 2.010 4.500 4.490 4.500c.88 0 1.700-.26 2.390-.7L21.580 23 23 21.580l-3.120-3.110zm-3.800.11c-1.380 0-2.500-1.120-2.500-2.500s1.120-2.500 2.500-2.500 2.500 1.120 2.500 2.500-1.120 2.500-2.500 2.500zm-.36-8.500c-.74.02-1.450.18-2.100.45l-.55-.83-3.800 6.180-3.010-3.520-3.630 5.810L1 17l5-8 3 3.500L13 6l2.720 4.080zm2.590.5c-.64-.28-1.330-.45-2.050-.49L21.380 2 23 3.180l-4.690 7.400z"></path></svg>
<div class="b" style="left:486px;top:578px;width:7px;height:71.5px;background:#f3d756;"></div>
<svg class="ic" style="left:518px;top:583px;width:63px;height:63px;" viewBox="0 0 100 100"><defs><clipPath id="cpw2518583"><rect width="100" height="100" rx="7"></rect></clipPath><filter id="b0w2518583" x="-30%" y="-30%" width="160%" height="160%"><feGaussianBlur stdDeviation="0.7"></feGaussianBlur></filter><filter id="b1w2518583" x="-30%" y="-30%" width="160%" height="160%"><feGaussianBlur stdDeviation="1.3"></feGaussianBlur></filter><filter id="b2w2518583" x="-30%" y="-30%" width="160%" height="160%"><feGaussianBlur stdDeviation="2.6"></feGaussianBlur></filter><filter id="b3w2518583" x="-30%" y="-30%" width="160%" height="160%"><feGaussianBlur stdDeviation="4.5"></feGaussianBlur></filter><linearGradient id="w2cw2518583" x1="0" y1="0" x2="1" y2="1"><stop offset="0" stop-color="#f7e3a6"></stop><stop offset="1" stop-color="#f0d488"></stop></linearGradient><radialGradient id="w2fw2518583" cx=".5" cy=".45" r=".6"><stop offset="0" stop-color="#f8ddd0"></stop><stop offset="1" stop-color="#eec0aa"></stop></radialGradient></defs><g clip-path="url(#cpw2518583)"><rect width="100" height="100" fill="#67885a"></rect><g filter="url(#b2w2518583)"><circle cx="16" cy="27" r="11" fill="#86a676"></circle><circle cx="10" cy="5" r="9" fill="#4d6e40"></circle><circle cx="20" cy="52" r="10" fill="#36532c"></circle><circle cx="84" cy="26" r="15" fill="#456838"></circle><circle cx="88" cy="52" r="13" fill="#8dab7d"></circle><circle cx="40" cy="10" r="10" fill="#4f7441"></circle><circle cx="6" cy="42" r="8" fill="#82a272"></circle><circle cx="66" cy="6" r="9" fill="#3a562e"></circle><circle cx="26" cy="32" r="8" fill="#7d9e6d"></circle><circle cx="96" cy="8" r="8" fill="#2f4a26"></circle><circle cx="76" cy="44" r="7" fill="#759668"></circle></g><rect x="-2" y="60" width="104" height="44" fill="#dfe0e8" filter="url(#b1w2518583)"></rect><rect x="-2" y="68" width="104" height="36" fill="#fcfcfa" filter="url(#b1w2518583)"></rect><rect x="-1" y="84" width="15" height="8" fill="#f8eebd" filter="url(#b0w2518583)"></rect><rect x="90" y="82" width="11" height="8" fill="#f8eebd" filter="url(#b0w2518583)"></rect><g filter="url(#b0w2518583)"><path d="M27 72 C24 78 16 84 13 92 L11 101 L95 101 C94 90 92 80 86 71 C80 63 72 58 64 57 C56 62 40 66 27 72Z" fill="url(#w2cw2518583)"></path><path d="M50 78 C44 82 36 85 28 91 C22 95 18 98 15 101 L34 101 C38 96 44 90 50 80Z" fill="#b8a2d6"></path><path d="M44 56 L46 70 L50 79 L57 70 L63 58Z" fill="#eec6b0"></path><path d="M53 4 C47 5 41 10 37 17 C33 25 32 36 31 46 C30 56 27 64 27 72 C27 78 29 82 31 82 C34 82 35 79 37 80 C38 81 38 84 40 83 C43 80 46 75 47 68 C44 62 42 56 41 50 L41 30 C44 22 60 20 65 30 L65 50 C65 56 64 62 61 67 C66 64 70 54 71 44 C71 30 70 20 66 13 C63 8 58 4 53 4Z" fill="#c46a32"></path><path d="M52 20 C46 21 42 26 41 33 C40 40 40 46 42 51 C44 56 47 60 52 60 C57 60 61 56 63 51 C65 46 65.500 40 65 34 C64 26 59 20 52 20Z" fill="url(#w2fw2518583)"></path><path d="M53 4 C46 7 41 14 40 24 C39 30 39 36 40 40 C42 30 48 22 56 21 C60 21 64 24 66 30 C66 20 62 8 53 4Z" fill="#c8703a"></path><path d="M33 40 C31 52 30 64 32 76 C34 70 36 60 38 50Z" fill="#d98a4a" opacity=".6"></path><path d="M45 46 Q52 49 59 46 Q57 52 52 52.500 Q47 52 45 46Z" fill="#fff"></path><path d="M44.500 45.500 Q52 48.500 59.500 45.500 Q52 50 44.500 45.500Z" fill="#c8787a" opacity=".8"></path><ellipse cx="46" cy="34" rx="2.800" ry="1.100" fill="#6e625e"></ellipse><ellipse cx="59" cy="34" rx="2.800" ry="1.100" fill="#6e625e"></ellipse><ellipse cx="44.500" cy="42.500" rx="3.500" ry="2.500" fill="#f0a8a0" opacity=".5"></ellipse><ellipse cx="60.500" cy="42.500" rx="3.500" ry="2.500" fill="#f0a8a0" opacity=".5"></ellipse></g></g></svg>
<div class="t rt" style="top:597.43px;height:34px;line-height:34px;font-size:26px;color:#212121;-webkit-text-stroke:0.42px;left:622.83px;"><span style="letter-spacing: -0.161px; display: inline-block; transform: scaleX(0.9764); transform-origin: 0% 50%;">Training Videos</span></div>
<div class="t " style="top:597.43px;height:34px;line-height:34px;font-size:26px;color:#111;-webkit-text-stroke:0.42px;left:587.00px;width:600px;text-align:right;"><span><span style="color:#555;display:inline-block;transform:scaleX(.81);transform-origin:100% 50%">&gt;=</span> 20</span></div>
<div class="t " style="top:597.43px;height:34px;line-height:34px;font-size:26px;color:#db4031;-webkit-text-stroke:0.42px;left:707.50px;width:600px;text-align:right;"><span>10<span style="letter-spacing:-1px">.</span>67</span></div>
<div class="t " style="top:597.43px;height:34px;line-height:34px;font-size:26px;color:#111;-webkit-text-stroke:0.42px;left:828.00px;width:600px;text-align:right;"><span>192</span></div>
<div class="b" style="left:1192.0px;top:578px;width:2px;height:72px;background:#e2e2e2;"></div>
<div class="b" style="left:1312.5px;top:578px;width:2px;height:72px;background:#e2e2e2;"></div>
<div class="b" style="left:1433.0px;top:578px;width:2px;height:72px;background:#e2e2e2;"></div>
<div class="b" style="left:1553.5px;top:578px;width:2px;height:72px;background:#e2e2e2;"></div>
<div class="b" style="left:1674.0px;top:578px;width:2px;height:72px;background:#e2e2e2;"></div>
<div class="b" style="left:1794.5px;top:578px;width:2px;height:72px;background:#e2e2e2;"></div>
<div class="b" style="left:1915.0px;top:578px;width:2px;height:72px;background:#e2e2e2;"></div>
<div class="b" style="left:2035.5px;top:578px;width:2px;height:72px;background:#e2e2e2;"></div>
<div class="b" style="left:2156.0px;top:578px;width:2px;height:72px;background:#e2e2e2;"></div>
<div class="b" style="left:2276.5px;top:578px;width:2px;height:72px;background:#e2e2e2;"></div>
<div class="b" style="left:2397.0px;top:578px;width:2px;height:72px;background:#e2e2e2;"></div>
<div class="b" style="left:2517.5px;top:578px;width:2px;height:72px;background:#e2e2e2;"></div>
<div class="b" style="left:2638.0px;top:578px;width:2px;height:72px;background:#e2e2e2;"></div>
<div class="t " style="top:597.43px;height:34px;line-height:34px;font-size:26px;color:#db4031;-webkit-text-stroke:0.42px;left:948.50px;width:600px;text-align:right;"><span>12</span></div>
<div class="t " style="top:597.43px;height:34px;line-height:34px;font-size:26px;color:#4b9b41;-webkit-text-stroke:0.42px;left:1069.00px;width:600px;text-align:right;"><span>23</span></div>
<div class="t " style="top:597.43px;height:34px;line-height:34px;font-size:26px;color:#4b9b41;-webkit-text-stroke:0.42px;left:1189.50px;width:600px;text-align:right;"><span>28</span></div>
<div class="t " style="top:597.43px;height:34px;line-height:34px;font-size:26px;color:#db4031;-webkit-text-stroke:0.42px;left:1310.00px;width:600px;text-align:right;"><span>18</span></div>
<div class="t " style="top:597.43px;height:34px;line-height:34px;font-size:26px;color:#db4031;-webkit-text-stroke:0.42px;left:1430.50px;width:600px;text-align:right;"><span>12</span></div>
<div class="t " style="top:597.43px;height:34px;line-height:34px;font-size:26px;color:#4b9b41;-webkit-text-stroke:0.42px;left:1551.00px;width:600px;text-align:right;"><span>56</span></div>
<div class="t " style="top:597.43px;height:34px;line-height:34px;font-size:26px;color:#db4031;-webkit-text-stroke:0.42px;left:1671.50px;width:600px;text-align:right;"><span>3</span></div>
<div class="t " style="top:597.43px;height:34px;line-height:34px;font-size:26px;color:#4b9b41;-webkit-text-stroke:0.42px;left:1792.00px;width:600px;text-align:right;"><span>1</span></div>
<div class="t " style="top:597.43px;height:34px;line-height:34px;font-size:26px;color:#db4031;-webkit-text-stroke:0.42px;left:1912.50px;width:600px;text-align:right;"><span>1</span></div>
<div class="t " style="top:597.43px;height:34px;line-height:34px;font-size:26px;color:#4b9b41;-webkit-text-stroke:0.42px;left:2033.00px;width:600px;text-align:right;"><span>6</span></div>
<div class="t " style="top:597.43px;height:34px;line-height:34px;font-size:26px;color:#4b9b41;-webkit-text-stroke:0.42px;left:2153.50px;width:600px;text-align:right;"><span>1</span></div>
<svg class="ic" style="left:2281.5px;top:571.2px;width:29.3px;height:29.3px" viewBox="0 0 24 24"><path fill="#a2a2a2" d="M19.880 18.470c.44-.7.7-1.510.7-2.390 0-2.490-2.010-4.500-4.500-4.500s-4.500 2.010-4.500 4.500 2.010 4.500 4.490 4.500c.88 0 1.700-.26 2.390-.7L21.580 23 23 21.580l-3.120-3.110zm-3.800.11c-1.380 0-2.500-1.120-2.500-2.500s1.120-2.500 2.500-2.500 2.500 1.120 2.500 2.500-1.120 2.500-2.500 2.500zm-.36-8.500c-.74.02-1.450.18-2.100.45l-.55-.83-3.800 6.180-3.010-3.520-3.630 5.810L1 17l5-8 3 3.500L13 6l2.720 4.080zm2.590.5c-.64-.28-1.330-.45-2.050-.49L21.380 2 23 3.180l-4.690 7.400z"></path></svg>
<svg class="ic" style="left:2402.0px;top:571.2px;width:29.3px;height:29.3px" viewBox="0 0 24 24"><path fill="#a2a2a2" d="M19.880 18.470c.44-.7.7-1.510.7-2.390 0-2.490-2.010-4.500-4.500-4.500s-4.500 2.010-4.500 4.500 2.010 4.500 4.490 4.500c.88 0 1.700-.26 2.390-.7L21.580 23 23 21.580l-3.120-3.110zm-3.800.11c-1.380 0-2.500-1.120-2.500-2.500s1.120-2.500 2.500-2.500 2.500 1.120 2.500 2.500-1.120 2.500-2.500 2.500zm-.36-8.500c-.74.02-1.450.18-2.100.45l-.55-.83-3.800 6.180-3.010-3.520-3.630 5.810L1 17l5-8 3 3.500L13 6l2.720 4.080zm2.590.5c-.64-.28-1.330-.45-2.050-.49L21.380 2 23 3.180l-4.690 7.400z"></path></svg>
<svg class="ic" style="left:2522.5px;top:571.2px;width:29.3px;height:29.3px" viewBox="0 0 24 24"><path fill="#a2a2a2" d="M19.880 18.470c.44-.7.7-1.510.7-2.390 0-2.490-2.010-4.500-4.500-4.500s-4.500 2.010-4.500 4.500 2.010 4.500 4.490 4.500c.88 0 1.700-.26 2.390-.7L21.580 23 23 21.580l-3.120-3.110zm-3.800.11c-1.380 0-2.500-1.120-2.500-2.500s1.120-2.500 2.500-2.500 2.500 1.120 2.500 2.500-1.120 2.500-2.500 2.500zm-.36-8.500c-.74.02-1.450.18-2.100.45l-.55-.83-3.800 6.180-3.010-3.520-3.630 5.810L1 17l5-8 3 3.500L13 6l2.720 4.080zm2.590.5c-.64-.28-1.330-.45-2.050-.49L21.380 2 23 3.180l-4.690 7.400z"></path></svg>
<svg class="ic" style="left:2643.0px;top:571.2px;width:29.3px;height:29.3px" viewBox="0 0 24 24"><path fill="#a2a2a2" d="M19.880 18.470c.44-.7.7-1.510.7-2.390 0-2.490-2.010-4.500-4.500-4.500s-4.500 2.010-4.500 4.500 2.010 4.500 4.490 4.500c.88 0 1.700-.26 2.390-.7L21.580 23 23 21.580l-3.120-3.110zm-3.800.11c-1.380 0-2.500-1.120-2.500-2.500s1.120-2.500 2.500-2.500 2.500 1.120 2.500 2.500-1.120 2.500-2.500 2.500zm-.36-8.500c-.74.02-1.450.18-2.100.45l-.55-.83-3.800 6.180-3.010-3.520-3.630 5.810L1 17l5-8 3 3.500L13 6l2.720 4.080zm2.590.5c-.64-.28-1.330-.45-2.050-.49L21.380 2 23 3.180l-4.690 7.400z"></path></svg>
<div class="b" style="left:486px;top:670px;width:7px;height:71.5px;background:#f3d756;"></div>
<svg class="ic" style="left:518px;top:675px;width:63px;height:63px;" viewBox="0 0 100 100"><defs><clipPath id="cpm1518675"><rect width="100" height="100" rx="7"></rect></clipPath><filter id="b0m1518675" x="-30%" y="-30%" width="160%" height="160%"><feGaussianBlur stdDeviation="0.7"></feGaussianBlur></filter><filter id="b1m1518675" x="-30%" y="-30%" width="160%" height="160%"><feGaussianBlur stdDeviation="1.3"></feGaussianBlur></filter><filter id="b2m1518675" x="-30%" y="-30%" width="160%" height="160%"><feGaussianBlur stdDeviation="2.6"></feGaussianBlur></filter><filter id="b3m1518675" x="-30%" y="-30%" width="160%" height="160%"><feGaussianBlur stdDeviation="4.5"></feGaussianBlur></filter><linearGradient id="m1fm1518675" x1="0" y1="0" x2="1" y2="0"><stop offset="0" stop-color="#c09c90"></stop><stop offset=".6" stop-color="#b59086"></stop><stop offset="1" stop-color="#8e6c64"></stop></linearGradient></defs><g clip-path="url(#cpm1518675)"><rect width="100" height="100" fill="#402c20"></rect><g filter="url(#b1m1518675)"><rect x="7" y="0" width="7" height="100" fill="#5c402b"></rect><rect x="15" y="0" width="4" height="100" fill="#2e2018"></rect><rect x="21" y="0" width="7" height="100" fill="#553a27"></rect><rect x="33" y="0" width="6" height="100" fill="#51382a"></rect><rect x="44" y="0" width="8" height="40" fill="#4e3627"></rect><rect x="56" y="0" width="8" height="40" fill="#563b28"></rect><rect x="66" y="0" width="10" height="100" fill="#8a5a2c"></rect><rect x="77" y="0" width="3" height="100" fill="#4a321f"></rect><rect x="80" y="0" width="9" height="100" fill="#70492a"></rect><rect x="91" y="0" width="6" height="100" fill="#7e5431"></rect><rect x="97" y="0" width="4" height="100" fill="#4a3220"></rect></g><ellipse cx="82" cy="0.500" rx="10" ry="2.500" fill="#c6cacd" filter="url(#b0m1518675)"></ellipse><g filter="url(#b0m1518675)"><path d="M-1 73 C8 69 20 67 31 63 L69 63 C80 67 92 70 101 75 L101 101 L-1 101Z" fill="#2a1a16"></path><path d="M36 57 C32 62 22 72 17 78 C22 82 28 85 31 86 L32 101 L41 101 C40 90 38 75 37 66Z" fill="#c9b997"></path><path d="M64 57 C68 62 74 72 78 78 C74 82 68 85 64 86 L63 101 L55 101 C57 90 60 75 62 66Z" fill="#c9b997"></path><path d="M36 64 L62 64 L62 101 L40 101Z" fill="#14141a"></path><path d="M39 58 L61 58 L58 72 L50 89 L43 74Z" fill="#a8837a"></path><rect x="49" y="93" width="2.500" height="5" rx="1" fill="#b9b4a0"></rect><path d="M49 19 C42 19 36 23 33 30 C31 36 30.500 44 32 50 C33 54 34 56 36 55 L36 38 C40 30 58 29 63 38 L63.500 55 C66 55 67 50 67.500 45 C68 38 67 30 63 25 C60 21 55 19 49 19Z" fill="#1c1817"></path><path d="M49 25 C43 25 38 29 36 35 C35 40 35 46 36 51 C37 57 40 62 44 65 C47 67.500 52 67.500 55 65 C59 62 62 56 63 50 C64 44 64 38 62 33 C60 28 55 25 49 25Z" fill="url(#m1fm1518675)"></path><ellipse cx="33.500" cy="46" rx="2" ry="4" fill="#a07a70"></ellipse><ellipse cx="65.500" cy="46" rx="2" ry="4" fill="#7e5c54"></ellipse><path d="M37.500 38.500 Q42 36.500 47 38.500 L47 39.800 Q42 38 37.500 40Z M53 38.500 Q58 36.500 62 38.500 L62 40 Q58 38 53 39.800Z" fill="#2a1e1c"></path><ellipse cx="42" cy="41.800" rx="2.800" ry="1.200" fill="#4a4e5a"></ellipse><ellipse cx="56.500" cy="41.800" rx="2.800" ry="1.200" fill="#4a4e5a"></ellipse><path d="M48 43 L46.500 50 Q49.500 52 52.500 50 L51 43Z" fill="#a27a70" opacity=".8"></path><ellipse cx="49.500" cy="54.500" rx="5" ry="1.500" fill="#a8706e"></ellipse></g></g></svg>
<div class="t rt" style="top:689.13px;height:34px;line-height:34px;font-size:26px;color:#212121;-webkit-text-stroke:0.42px;left:622.83px;"><span style="letter-spacing: -0.132px; display: inline-block; transform: scaleX(0.9807); transform-origin: 0% 50%;">Total Client Demos</span></div>
<div class="t " style="top:689.13px;height:34px;line-height:34px;font-size:26px;color:#111;-webkit-text-stroke:0.42px;left:587.00px;width:600px;text-align:right;"><span><span style="color:#555;display:inline-block;transform:scaleX(.81);transform-origin:100% 50%">&gt;=</span> 80</span></div>
<div class="t " style="top:689.13px;height:34px;line-height:34px;font-size:26px;color:#4b9b41;-webkit-text-stroke:0.42px;left:707.50px;width:600px;text-align:right;"><span>116<span style="letter-spacing:-1px">.</span>97</span></div>
<div class="t " style="top:689.13px;height:34px;line-height:34px;font-size:26px;color:#111;-webkit-text-stroke:0.42px;left:828.00px;width:600px;text-align:right;"><span>3<span style="letter-spacing:-2px">,</span>509</span></div>
<div class="b" style="left:1192.0px;top:670px;width:2px;height:72px;background:#e2e2e2;"></div>
<div class="b" style="left:1312.5px;top:670px;width:2px;height:72px;background:#e2e2e2;"></div>
<div class="b" style="left:1433.0px;top:670px;width:2px;height:72px;background:#e2e2e2;"></div>
<div class="b" style="left:1553.5px;top:670px;width:2px;height:72px;background:#e2e2e2;"></div>
<div class="b" style="left:1674.0px;top:670px;width:2px;height:72px;background:#e2e2e2;"></div>
<div class="b" style="left:1794.5px;top:670px;width:2px;height:72px;background:#e2e2e2;"></div>
<div class="b" style="left:1915.0px;top:670px;width:2px;height:72px;background:#e2e2e2;"></div>
<div class="b" style="left:2035.5px;top:670px;width:2px;height:72px;background:#e2e2e2;"></div>
<div class="b" style="left:2156.0px;top:670px;width:2px;height:72px;background:#e2e2e2;"></div>
<div class="b" style="left:2276.5px;top:670px;width:2px;height:72px;background:#e2e2e2;"></div>
<div class="b" style="left:2397.0px;top:670px;width:2px;height:72px;background:#e2e2e2;"></div>
<div class="b" style="left:2517.5px;top:670px;width:2px;height:72px;background:#e2e2e2;"></div>
<div class="b" style="left:2638.0px;top:670px;width:2px;height:72px;background:#e2e2e2;"></div>
<div class="t " style="top:689.13px;height:34px;line-height:34px;font-size:26px;color:#4b9b41;-webkit-text-stroke:0.42px;left:948.50px;width:600px;text-align:right;"><span>85</span></div>
<div class="t " style="top:689.13px;height:34px;line-height:34px;font-size:26px;color:#4b9b41;-webkit-text-stroke:0.42px;left:1069.00px;width:600px;text-align:right;"><span>87</span></div>
<div class="t " style="top:689.13px;height:34px;line-height:34px;font-size:26px;color:#db4031;-webkit-text-stroke:0.42px;left:1189.50px;width:600px;text-align:right;"><span>78</span></div>
<div class="t " style="top:689.13px;height:34px;line-height:34px;font-size:26px;color:#db4031;-webkit-text-stroke:0.42px;left:1310.00px;width:600px;text-align:right;"><span>79</span></div>
<div class="t " style="top:689.13px;height:34px;line-height:34px;font-size:26px;color:#4b9b41;-webkit-text-stroke:0.42px;left:1430.50px;width:600px;text-align:right;"><span>95</span></div>
<div class="t " style="top:689.13px;height:34px;line-height:34px;font-size:26px;color:#4b9b41;-webkit-text-stroke:0.42px;left:1551.00px;width:600px;text-align:right;"><span>84</span></div>
<div class="t " style="top:689.13px;height:34px;line-height:34px;font-size:26px;color:#db4031;-webkit-text-stroke:0.42px;left:1671.50px;width:600px;text-align:right;"><span>11</span></div>
<div class="t " style="top:689.13px;height:34px;line-height:34px;font-size:26px;color:#4b9b41;-webkit-text-stroke:0.42px;left:1792.00px;width:600px;text-align:right;"><span>15</span></div>
<div class="t " style="top:689.13px;height:34px;line-height:34px;font-size:26px;color:#4b9b41;-webkit-text-stroke:0.42px;left:1912.50px;width:600px;text-align:right;"><span>7</span></div>
<div class="t " style="top:689.13px;height:34px;line-height:34px;font-size:26px;color:#4b9b41;-webkit-text-stroke:0.42px;left:2033.00px;width:600px;text-align:right;"><span>6</span></div>
<div class="t " style="top:689.13px;height:34px;line-height:34px;font-size:26px;color:#4b9b41;-webkit-text-stroke:0.42px;left:2153.50px;width:600px;text-align:right;"><span>2<span style="letter-spacing:-2px">,</span>134</span></div>
<svg class="ic" style="left:2281.5px;top:663.0px;width:29.3px;height:29.3px" viewBox="0 0 24 24"><path fill="#a2a2a2" d="M19.880 18.470c.44-.7.7-1.510.7-2.390 0-2.490-2.010-4.500-4.500-4.500s-4.500 2.010-4.500 4.500 2.010 4.500 4.490 4.500c.88 0 1.700-.26 2.390-.7L21.580 23 23 21.580l-3.120-3.110zm-3.800.11c-1.380 0-2.500-1.120-2.500-2.500s1.120-2.500 2.500-2.500 2.500 1.120 2.500 2.500-1.120 2.500-2.500 2.500zm-.36-8.500c-.74.02-1.450.18-2.100.45l-.55-.83-3.800 6.180-3.010-3.520-3.630 5.810L1 17l5-8 3 3.500L13 6l2.720 4.080zm2.590.5c-.64-.28-1.330-.45-2.050-.49L21.380 2 23 3.180l-4.690 7.400z"></path></svg>
<svg class="ic" style="left:2402.0px;top:663.0px;width:29.3px;height:29.3px" viewBox="0 0 24 24"><path fill="#a2a2a2" d="M19.880 18.470c.44-.7.7-1.510.7-2.390 0-2.490-2.010-4.500-4.500-4.500s-4.500 2.010-4.500 4.500 2.010 4.500 4.490 4.500c.88 0 1.700-.26 2.390-.7L21.580 23 23 21.580l-3.120-3.110zm-3.800.11c-1.380 0-2.500-1.120-2.500-2.500s1.120-2.500 2.500-2.500 2.500 1.120 2.500 2.500-1.120 2.500-2.500 2.500zm-.36-8.500c-.74.02-1.450.18-2.100.45l-.55-.83-3.800 6.180-3.010-3.520-3.630 5.810L1 17l5-8 3 3.500L13 6l2.720 4.080zm2.590.5c-.64-.28-1.330-.45-2.050-.49L21.380 2 23 3.180l-4.690 7.400z"></path></svg>
<svg class="ic" style="left:2522.5px;top:663.0px;width:29.3px;height:29.3px" viewBox="0 0 24 24"><path fill="#a2a2a2" d="M19.880 18.470c.44-.7.7-1.510.7-2.390 0-2.490-2.010-4.500-4.500-4.500s-4.500 2.010-4.500 4.500 2.010 4.500 4.490 4.500c.88 0 1.700-.26 2.390-.7L21.580 23 23 21.580l-3.120-3.110zm-3.800.11c-1.380 0-2.500-1.120-2.500-2.500s1.120-2.500 2.500-2.500 2.500 1.120 2.500 2.500-1.120 2.500-2.500 2.500zm-.36-8.500c-.74.02-1.450.18-2.100.45l-.55-.83-3.800 6.180-3.010-3.520-3.630 5.810L1 17l5-8 3 3.500L13 6l2.720 4.080zm2.590.5c-.64-.28-1.330-.45-2.050-.49L21.380 2 23 3.180l-4.690 7.400z"></path></svg>
<div class="b" style="left:486px;top:762px;width:7px;height:71.5px;background:#f3d756;"></div>
<svg class="ic" style="left:518px;top:766px;width:63px;height:63px;" viewBox="0 0 100 100"><defs><clipPath id="cpm2518766"><rect width="100" height="100" rx="7"></rect></clipPath><filter id="b0m2518766" x="-30%" y="-30%" width="160%" height="160%"><feGaussianBlur stdDeviation="0.7"></feGaussianBlur></filter><filter id="b1m2518766" x="-30%" y="-30%" width="160%" height="160%"><feGaussianBlur stdDeviation="1.3"></feGaussianBlur></filter><filter id="b2m2518766" x="-30%" y="-30%" width="160%" height="160%"><feGaussianBlur stdDeviation="2.6"></feGaussianBlur></filter><filter id="b3m2518766" x="-30%" y="-30%" width="160%" height="160%"><feGaussianBlur stdDeviation="4.5"></feGaussianBlur></filter><radialGradient id="m2vm2518766" cx=".48" cy=".5" r=".75"><stop offset=".55" stop-color="#000" stop-opacity="0"></stop><stop offset="1" stop-color="#120a03" stop-opacity=".95"></stop></radialGradient></defs><g clip-path="url(#cpm2518766)"><rect width="100" height="100" fill="#3a3124"></rect><rect x="83" y="-2" width="20" height="104" fill="#5a4322" filter="url(#b1m2518766)"></rect><rect x="88" y="30" width="5" height="72" fill="#6e5228" filter="url(#b1m2518766)"></rect><g filter="url(#b1m2518766)"><circle cx="17" cy="11" r="4.200" fill="#6a4a2c"></circle><circle cx="40" cy="11" r="4.200" fill="#a07040"></circle><circle cx="65" cy="10" r="4.500" fill="#6a4a28"></circle><circle cx="29" cy="21" r="4.200" fill="#241a12"></circle><circle cx="50" cy="20" r="4" fill="#34261a"></circle><circle cx="65" cy="26" r="5.600" fill="#5e4024"></circle><circle cx="25" cy="38" r="4.200" fill="#281c12"></circle><circle cx="52" cy="38" r="4.800" fill="#22160e"></circle></g><ellipse cx="87" cy="11" rx="2.800" ry="5.500" fill="#dfe3e6" filter="url(#b1m2518766)"></ellipse><g filter="url(#b0m2518766)"><rect x="-1" y="63.500" width="85" height="3" fill="#4c3a22"></rect><rect x="2" y="66" width="3" height="14" fill="#4c3a22"></rect><rect x="10" y="66" width="3" height="14" fill="#4c3a22"></rect><rect x="74" y="66" width="3" height="12" fill="#4c3a22"></rect><rect x="-1" y="78" width="15" height="24" fill="#65574a"></rect><path d="M13 79 C15 72 30 72 31 79 L71 79 C72 72 87 72 88 79 L88 101 L13 101Z" fill="#17171a"></path><path d="M32 85 C40 82 62 82 70 85 L70 101 L32 101Z" fill="#6e6450"></path><path d="M49 88 L53 101 L47 101Z" fill="#2a2622"></path><path d="M38 46 C30 48 24 56 22 66 C20 74 20 78 22 82 L34 86 L40 80 L50 80 L56 86 L64 80 C64 70 62 58 56 51 C52 47 44 45 38 46Z" fill="#c57a3d"></path><path d="M40 50 L44 62 L47 50Z" fill="#a06230" opacity=".6"></path><ellipse cx="44.500" cy="80.500" rx="7.500" ry="3.800" fill="#c39a82"></ellipse><rect x="36.500" y="42" width="6" height="6" fill="#a88268"></rect><ellipse cx="39.800" cy="38" rx="5.800" ry="7.500" fill="#b8917a"></ellipse><path d="M32 35 C31 27 36 23 41 24 C46 24 48 28 47 33 C45 30 42 31 38 32 C35 33 34 36 33.500 38Z" fill="#2a1c14"></path></g><rect width="100" height="100" fill="url(#m2vm2518766)"></rect></g></svg>
<div class="t rt" style="top:780.63px;height:34px;line-height:34px;font-size:26px;color:#212121;-webkit-text-stroke:0.42px;left:622.83px;"><span style="letter-spacing: -0.183px; display: inline-block; transform: scaleX(0.9733); transform-origin: 0% 50%;">Clients Converted</span></div>
<div class="t " style="top:780.63px;height:34px;line-height:34px;font-size:26px;color:#111;-webkit-text-stroke:0.42px;left:587.00px;width:600px;text-align:right;"><span><span style="color:#555;display:inline-block;transform:scaleX(.81);transform-origin:100% 50%">&gt;=</span> 50</span></div>
<div class="t " style="top:780.63px;height:34px;line-height:34px;font-size:26px;color:#db4031;-webkit-text-stroke:0.42px;left:707.50px;width:600px;text-align:right;"><span>45<span style="letter-spacing:-1px">.</span>36</span></div>
<div class="t " style="top:780.63px;height:34px;line-height:34px;font-size:26px;color:#111;-webkit-text-stroke:0.42px;left:828.00px;width:600px;text-align:right;"><span>1<span style="letter-spacing:-2px">,</span>134</span></div>
<div class="b" style="left:1192.0px;top:762px;width:2px;height:72px;background:#e2e2e2;"></div>
<div class="b" style="left:1312.5px;top:762px;width:2px;height:72px;background:#e2e2e2;"></div>
<div class="b" style="left:1433.0px;top:762px;width:2px;height:72px;background:#e2e2e2;"></div>
<div class="b" style="left:1553.5px;top:762px;width:2px;height:72px;background:#e2e2e2;"></div>
<div class="b" style="left:1674.0px;top:762px;width:2px;height:72px;background:#e2e2e2;"></div>
<div class="b" style="left:1794.5px;top:762px;width:2px;height:72px;background:#e2e2e2;"></div>
<div class="b" style="left:1915.0px;top:762px;width:2px;height:72px;background:#e2e2e2;"></div>
<div class="b" style="left:2035.5px;top:762px;width:2px;height:72px;background:#e2e2e2;"></div>
<div class="b" style="left:2156.0px;top:762px;width:2px;height:72px;background:#e2e2e2;"></div>
<div class="b" style="left:2276.5px;top:762px;width:2px;height:72px;background:#e2e2e2;"></div>
<div class="b" style="left:2397.0px;top:762px;width:2px;height:72px;background:#e2e2e2;"></div>
<div class="b" style="left:2517.5px;top:762px;width:2px;height:72px;background:#e2e2e2;"></div>
<div class="b" style="left:2638.0px;top:762px;width:2px;height:72px;background:#e2e2e2;"></div>
<div class="t " style="top:780.63px;height:34px;line-height:34px;font-size:26px;color:#4b9b41;-webkit-text-stroke:0.42px;left:948.50px;width:600px;text-align:right;"><span>54</span></div>
<div class="t " style="top:780.63px;height:34px;line-height:34px;font-size:26px;color:#4b9b41;-webkit-text-stroke:0.42px;left:1069.00px;width:600px;text-align:right;"><span>56</span></div>
<div class="t " style="top:780.63px;height:34px;line-height:34px;font-size:26px;color:#db4031;-webkit-text-stroke:0.42px;left:1189.50px;width:600px;text-align:right;"><span>35</span></div>
<div class="t " style="top:780.63px;height:34px;line-height:34px;font-size:26px;color:#db4031;-webkit-text-stroke:0.42px;left:1310.00px;width:600px;text-align:right;"><span>45</span></div>
<div class="t " style="top:780.63px;height:34px;line-height:34px;font-size:26px;color:#db4031;-webkit-text-stroke:0.42px;left:1430.50px;width:600px;text-align:right;"><span>35</span></div>
<div class="t " style="top:780.63px;height:34px;line-height:34px;font-size:26px;color:#db4031;-webkit-text-stroke:0.42px;left:1551.00px;width:600px;text-align:right;"><span>45</span></div>
<div class="t " style="top:780.63px;height:34px;line-height:34px;font-size:26px;color:#db4031;-webkit-text-stroke:0.42px;left:1671.50px;width:600px;text-align:right;"><span>2</span></div>
<div class="t " style="top:780.63px;height:34px;line-height:34px;font-size:26px;color:#db4031;-webkit-text-stroke:0.42px;left:1792.00px;width:600px;text-align:right;"><span>3</span></div>
<div class="t " style="top:780.63px;height:34px;line-height:34px;font-size:26px;color:#db4031;-webkit-text-stroke:0.42px;left:1912.50px;width:600px;text-align:right;"><span>1</span></div>
<div class="b" style="left:486px;top:854px;width:7px;height:71.5px;background:#5aa04f;"></div>
<svg class="ic" style="left:518px;top:858px;width:63px;height:63px;" viewBox="0 0 100 100"><defs><clipPath id="cpw1518858"><rect width="100" height="100" rx="7"></rect></clipPath><filter id="b0w1518858" x="-30%" y="-30%" width="160%" height="160%"><feGaussianBlur stdDeviation="0.7"></feGaussianBlur></filter><filter id="b1w1518858" x="-30%" y="-30%" width="160%" height="160%"><feGaussianBlur stdDeviation="1.3"></feGaussianBlur></filter><filter id="b2w1518858" x="-30%" y="-30%" width="160%" height="160%"><feGaussianBlur stdDeviation="2.6"></feGaussianBlur></filter><filter id="b3w1518858" x="-30%" y="-30%" width="160%" height="160%"><feGaussianBlur stdDeviation="4.5"></feGaussianBlur></filter><linearGradient id="w1gw1518858" x1="0" y1="0" x2="1" y2="0.2"><stop offset="0" stop-color="#e7e3d9"></stop><stop offset=".55" stop-color="#dcdacb"></stop><stop offset="1" stop-color="#cccdb9"></stop></linearGradient><radialGradient id="w1fw1518858" cx=".42" cy=".45" r=".65"><stop offset="0" stop-color="#ecc3ab"></stop><stop offset=".7" stop-color="#dcb098"></stop><stop offset="1" stop-color="#c29880"></stop></radialGradient><linearGradient id="w1nw1518858" x1="0" y1="0" x2="0" y2="1"><stop offset="0" stop-color="#8e6650"></stop><stop offset=".5" stop-color="#b48a72"></stop><stop offset="1" stop-color="#c4a084"></stop></linearGradient></defs><g clip-path="url(#cpw1518858)"><rect width="100" height="100" fill="url(#w1gw1518858)"></rect><path d="M-5 40 Q12 34 30 40 L28 105 L-5 105Z" fill="#b9aea6" filter="url(#b2w1518858)"></path><g filter="url(#b0w1518858)"><path d="M50 1 C44 1 38 5 34 10 C29 17 26 28 24 38 C22 50 21 62 18 74 C16 82 12 89 6 95 C4 97 2 98 0 100 L101 100 L101 97 C96 94 92 88 90 82 C86 70 83 56 80 44 C78 34 75 22 70 14 C65 6 58 1 50 1Z" fill="#1a1a1e"></path><path d="M33 78 L33 101 L66 101 L66 78Z" fill="url(#w1nw1518858)"></path><path d="M47 15 C42 17 37 24 34 31 C32 36 31 42 30.500 48 C30 56 31 63 34 70 C37 77 42 82 47 84.500 C50 86 53 86 56 84.500 C61 82 65 75 67 68 C69 61 69 52 68.500 45 C68 38 66 30 62 24 C58 19 52 14 47 15Z" fill="url(#w1fw1518858)"></path><ellipse cx="38" cy="59" rx="7" ry="6" fill="#e8a090" opacity=".45" filter="url(#b1w1518858)"></ellipse><path d="M32 38 Q38 34.500 46 37.500 L46 38.800 Q38 36.500 32.500 39.500Z" fill="#2a2220"></path><path d="M57 38 Q63 34.500 68.500 37 L68.500 38.500 Q63 36.500 57 39.300Z" fill="#2a2220"></path><ellipse cx="40" cy="44" rx="4.300" ry="1.900" fill="#3a2c28"></ellipse><ellipse cx="63" cy="44" rx="4" ry="1.900" fill="#3a2c28"></ellipse><path d="M50.500 47 L48 58 Q51.500 61.500 55.500 58.500 Q53 55 52.500 47Z" fill="#c99880" opacity=".75"></path><path d="M43 68 Q47 65.500 51.500 66.800 Q56 65.500 60 68 Q56 72 51.500 72 Q47 72 43 68Z" fill="#b46e68"></path><path d="M68 30 C72 44 74 60 70 78 C69 84 68 92 68 100 L78 100 C78 80 80 50 68 30Z" fill="#25252b" opacity=".8"></path></g></g></svg>
<div class="t rt" style="top:872.43px;height:34px;line-height:34px;font-size:26px;color:#212121;-webkit-text-stroke:0.42px;left:622.83px;"><span style="letter-spacing: -0.142px; display: inline-block; transform: scaleX(0.9809); transform-origin: 0% 50%;">New companies created</span></div>
<div class="t " style="top:872.43px;height:34px;line-height:34px;font-size:26px;color:#111;-webkit-text-stroke:0.42px;left:587.00px;width:600px;text-align:right;"><span><span style="color:#555;display:inline-block;transform:scaleX(.81);transform-origin:100% 50%">&gt;=</span> 20</span></div>
<div class="t " style="top:872.43px;height:34px;line-height:34px;font-size:26px;color:#4b9b41;-webkit-text-stroke:0.42px;left:707.50px;width:600px;text-align:right;"><span>369<span style="letter-spacing:-1px">.</span>58</span></div>
<div class="t " style="top:872.43px;height:34px;line-height:34px;font-size:26px;color:#111;-webkit-text-stroke:0.42px;left:828.00px;width:600px;text-align:right;"><span>9<span style="letter-spacing:-2px">,</span>609</span></div>
<div class="b" style="left:1192.0px;top:854px;width:2px;height:72px;background:#e2e2e2;"></div>
<div class="b" style="left:1312.5px;top:854px;width:2px;height:72px;background:#e2e2e2;"></div>
<div class="b" style="left:1433.0px;top:854px;width:2px;height:72px;background:#e2e2e2;"></div>
<div class="b" style="left:1553.5px;top:854px;width:2px;height:72px;background:#e2e2e2;"></div>
<div class="b" style="left:1674.0px;top:854px;width:2px;height:72px;background:#e2e2e2;"></div>
<div class="b" style="left:1794.5px;top:854px;width:2px;height:72px;background:#e2e2e2;"></div>
<div class="b" style="left:1915.0px;top:854px;width:2px;height:72px;background:#e2e2e2;"></div>
<div class="b" style="left:2035.5px;top:854px;width:2px;height:72px;background:#e2e2e2;"></div>
<div class="b" style="left:2156.0px;top:854px;width:2px;height:72px;background:#e2e2e2;"></div>
<div class="b" style="left:2276.5px;top:854px;width:2px;height:72px;background:#e2e2e2;"></div>
<div class="b" style="left:2397.0px;top:854px;width:2px;height:72px;background:#e2e2e2;"></div>
<div class="b" style="left:2517.5px;top:854px;width:2px;height:72px;background:#e2e2e2;"></div>
<div class="b" style="left:2638.0px;top:854px;width:2px;height:72px;background:#e2e2e2;"></div>
<div class="t " style="top:872.43px;height:34px;line-height:34px;font-size:26px;color:#4b9b41;-webkit-text-stroke:0.42px;left:948.50px;width:600px;text-align:right;"><span>234</span></div>
<div class="t " style="top:872.43px;height:34px;line-height:34px;font-size:26px;color:#4b9b41;-webkit-text-stroke:0.42px;left:1069.00px;width:600px;text-align:right;"><span>123</span></div>
<div class="t " style="top:872.43px;height:34px;line-height:34px;font-size:26px;color:#4b9b41;-webkit-text-stroke:0.42px;left:1189.50px;width:600px;text-align:right;"><span>23</span></div>
<div class="t " style="top:872.43px;height:34px;line-height:34px;font-size:26px;color:#4b9b41;-webkit-text-stroke:0.42px;left:1310.00px;width:600px;text-align:right;"><span>234</span></div>
<div class="t " style="top:872.43px;height:34px;line-height:34px;font-size:26px;color:#4b9b41;-webkit-text-stroke:0.42px;left:1430.50px;width:600px;text-align:right;"><span>542</span></div>
<div class="t " style="top:872.43px;height:34px;line-height:34px;font-size:26px;color:#4b9b41;-webkit-text-stroke:0.42px;left:1551.00px;width:600px;text-align:right;"><span>354</span></div>
<div class="t " style="top:871.13px;height:34px;line-height:34px;font-size:26px;color:#db4031;-webkit-text-stroke:0.42px;left:2162.83px;"><span>764</span></div>
<div class="b" style="left:2164.0px;top:900.2px;width:107.5px;height:1.8px;background:#e8832b;"></div>
<div class="t " style="top:872.43px;height:34px;line-height:34px;font-size:26px;color:#4b9b41;-webkit-text-stroke:0.42px;left:1792.00px;width:600px;text-align:right;"><span>183</span></div>
<svg class="ic" style="left:2281.5px;top:846.6px;width:29.3px;height:29.3px" viewBox="0 0 24 24"><path fill="#a2a2a2" d="M19.880 18.470c.44-.7.7-1.510.7-2.390 0-2.490-2.010-4.500-4.500-4.500s-4.500 2.010-4.500 4.500 2.010 4.500 4.490 4.500c.88 0 1.700-.26 2.390-.7L21.580 23 23 21.580l-3.120-3.110zm-3.800.11c-1.380 0-2.500-1.120-2.500-2.500s1.120-2.500 2.500-2.500 2.500 1.120 2.500 2.500-1.120 2.500-2.500 2.500zm-.36-8.500c-.74.02-1.450.18-2.100.45l-.55-.83-3.800 6.180-3.010-3.520-3.630 5.810L1 17l5-8 3 3.500L13 6l2.720 4.080zm2.590.5c-.64-.28-1.330-.45-2.050-.49L21.380 2 23 3.180l-4.690 7.400z"></path></svg>
<div class="t " style="top:1002.70px;height:31px;line-height:31px;font-size:24px;color:#777;-webkit-text-stroke:0.38px;left:2001.92px;"><span style="letter-spacing: -0.452px; display: inline-block; transform: scaleX(0.9268); transform-origin: 0% 50%;">Items per page:</span></div>
<div class="t " style="top:1003.18px;height:30px;line-height:30px;font-size:23px;color:#111;-webkit-text-stroke:0.37px;left:2165.37px;"><span>50</span></div>
<div class="b" style="left:2166.4px;top:1038.5px;width:100.3px;height:2.2px;background:#e8832b;"></div>
<svg class="ic" style="left:2241px;top:1014.400px;width:18px;height:9.300px" viewBox="0 0 18 9"><path d="M0 0H18L9 9Z" fill="#757575"></path></svg>
<div class="t " style="top:1002.70px;height:31px;line-height:31px;font-size:24px;color:#777;-webkit-text-stroke:0.38px;left:2330.92px;"><span style="letter-spacing: -0.306px; display: inline-block; transform: scaleX(0.9474); transform-origin: 0% 50%;">1 – 5 of 5</span></div>
<svg class="ic" style="left:2492.6px;top:996px;width:48px;height:48px" viewBox="0 0 24 24"><path fill="#bdbdbd" d="M18.410 16.590L13.820 12l4.590-4.590L17 6l-6 6 6 6zM6 6h2v12H6z"></path></svg>
<svg class="ic" style="left:2564px;top:996px;width:48px;height:48px" viewBox="0 0 24 24"><path fill="#bdbdbd" d="M15.410 7.410L14 6l-6 6 6 6 1.410-1.410L10.830 12z"></path></svg>
<svg class="ic" style="left:2636.7px;top:996px;width:48px;height:48px" viewBox="0 0 24 24"><path fill="#bdbdbd" d="M10 6L8.590 7.410 13.170 12l-4.580 4.590L10 18l6-6z"></path></svg>
<svg class="ic" style="left:2708.5px;top:996px;width:48px;height:48px" viewBox="0 0 24 24"><path fill="#bdbdbd" d="M5.590 7.410L10.180 12l-4.590 4.590L7 18l6-6-6-6zM16 6h2v12h-2z"></path></svg>
<div class="b" style="left:2652px;top:1323px;width:86px;height:86px;border-radius:50%;background:#2f2f2f;box-shadow:0 1px 6px rgba(0,0,0,.06),0 2px 32px rgba(0,0,0,.16);"></div>
<svg class="ic" style="left:2652px;top:1323px;width:86px;height:86px" viewBox="0 0 86 86"><path d="M27 22h30a3 3 0 0 1 3 3v38.500l-11.500-4H27a3 3 0 0 1-3-3V25a3 3 0 0 1 3-3z" fill="#fff"></path><path d="M30 49.500c7 5.500 17 5.500 24.500 0" stroke="#2f2f2f" stroke-width="2.400" fill="none" stroke-linecap="round"></path></svg>
<div class="b" style="left:0px;top:0px;width:410px;height:1462px;background:#fff;"></div>
<div class="b" style="left:410px;top:0px;width:2px;height:1462px;background:#dcdcdc;"></div>
<svg class="ic" style="left:0;top:0;width:200px;height:90px" viewBox="0 0 200 90">
<defs><clipPath id="lg9"><rect x="0" y="0" width="100" height="71.700"></rect></clipPath></defs>
<g clip-path="url(#lg9)"><path d="M36.190 48.220 A16.500 16.500 0 1 1 57.320 46.370 L22 81.700" fill="none" stroke="#000" stroke-width="8.250"></path></g>
<path d="M105.980 34.450 A16.400 16.400 0 0 0 73.180 34.450 L73.180 52 A16.400 16.400 0 0 0 80.910 65.910" fill="none" stroke="#000" stroke-width="8.250"></path>
<path d="M101.850 34 L110.100 34 L110.100 36.400 L101.850 45.100Z" fill="#000"></path>
</svg>
<div class="t xb" style="top:46.84px;height:19px;line-height:19px;font-size:14.8px;color:#000;font-weight:700;left:90.53px;-webkit-text-stroke:0.35px #000;"><span style="letter-spacing: 0.211px; display: inline-block; transform: scaleX(0.9045); transform-origin: 0% 50%;">NINETY</span></div>
<svg class="ic" style="left:374px;top:37px;width:18px;height:9.200px" viewBox="0 0 18 9"><path d="M0 0H18L9 9Z" fill="#808080"></path></svg>
<svg class="ic" style="left:24.5px;top:118.0px;width:44px;height:44px" viewBox="0 0 24 24"><path fill="#7d7d7d" d="M12 12.75c1.63 0 3.07.39 4.24.9 1.08.48 1.76 1.56 1.76 2.73V18H6v-1.61c0-1.18.68-2.26 1.76-2.73 1.17-.52 2.61-.91 4.24-.91zM4 13c1.1 0 2-.9 2-2s-.9-2-2-2-2 .9-2 2 .9 2 2 2zm1.13 1.1c-.37-.06-.74-.1-1.13-.1-.99 0-1.93.21-2.78.58C.48 14.9 0 15.62 0 16.43V18h4.5v-1.61c0-.83.23-1.61.63-2.29zM20 13c1.1 0 2-.9 2-2s-.9-2-2-2-2 .9-2 2 .9 2 2 2zm4 3.43c0-.81-.48-1.53-1.22-1.85-.85-.37-1.79-.58-2.78-.58-.39 0-.76.04-1.13.1.4.68.63 1.46.63 2.29V18H24v-1.57zM12 6c1.66 0 3 1.34 3 3s-1.34 3-3 3-3-1.34-3-3 1.34-3 3-3z"></path></svg>
<div class="t " style="top:123.43px;height:34px;line-height:34px;font-size:26px;color:#212121;-webkit-text-stroke:0.42px;left:96.33px;"><span style="letter-spacing: -0.171px; display: inline-block; transform: scaleX(0.9771); transform-origin: 0% 50%;">Partner Hub</span></div>
<svg class="ic" style="left:24.5px;top:197.1px;width:44px;height:44px" viewBox="0 0 24 24"><path fill="#7d7d7d" d="M3 13h8V3H3v10zm0 8h8v-6H3v6zm10 0h8V11h-8v10zm0-18v6h8V3h-8z"></path></svg>
<div class="t " style="top:202.53px;height:34px;line-height:34px;font-size:26px;color:#212121;-webkit-text-stroke:0.42px;left:96.33px;"><span style="letter-spacing: -0.236px; display: inline-block; transform: scaleX(0.972); transform-origin: 0% 50%;">Dashboard</span></div>
<svg class="ic" style="left:24.0px;top:275.7px;width:45px;height:45px" viewBox="0 0 45 45"><circle cx="22.500" cy="22.500" r="16.200" fill="none" stroke="#7d7d7d" stroke-width="3.500"></circle><circle cx="22.500" cy="22.500" r="9.200" fill="none" stroke="#7d7d7d" stroke-width="3.500"></circle><circle cx="22.500" cy="22.500" r="3.800" fill="#7d7d7d"></circle></svg>
<div class="t " style="top:281.63px;height:34px;line-height:34px;font-size:26px;color:#212121;-webkit-text-stroke:0.42px;left:96.33px;"><span style="letter-spacing: -0.242px; display: inline-block; transform: scaleX(0.9743); transform-origin: 0% 50%;">My 90</span></div>
<div class="b" style="left:0px;top:338px;width:410px;height:80px;background:#f4f4f4;"></div>
<div class="b" style="left:0px;top:338px;width:3px;height:80px;background:#0e0e0e;"></div>
<svg class="ic" style="left:24.0px;top:354.79999999999995px;width:45px;height:45px" viewBox="24 355.500 45 45"><path d="M30.500 361.500 V392.700 H65" fill="none" stroke="#111" stroke-width="3.600"></path><path d="M32.500 391 L40.500 371.500 L54 380 L63.500 365.500" fill="none" stroke="#111" stroke-width="3.600"></path></svg>
<div class="t " style="top:360.73px;height:34px;line-height:34px;font-size:26px;color:#212121;-webkit-text-stroke:0.42px;left:96.33px;"><span style="letter-spacing: -0.364px; display: inline-block; transform: scaleX(0.9623); transform-origin: 0% 50%;">Data</span></div>
<svg class="ic" style="left:24.5px;top:434.4px;width:44px;height:44px" viewBox="0 0 24 24"><path fill="#7d7d7d" d="M14 6l-3.75 5 2.85 3.8-1.6 1.2C9.81 13.75 7 10 7 10l-6 8h22L14 6z"></path></svg>
<div class="t " style="top:439.83px;height:34px;line-height:34px;font-size:26px;color:#212121;-webkit-text-stroke:0.42px;left:96.33px;"><span style="letter-spacing: -0.302px; display: inline-block; transform: scaleX(0.9684); transform-origin: 0% 50%;">Rocks</span></div>
<svg class="ic" style="left:24.5px;top:513.5px;width:44px;height:44px" viewBox="0 0 24 24"><path fill="#7d7d7d" d="M19,19H5V5H15V3H5C3.89,3 3,3.89 3,5V19A2,2 0 0,0 5,21H19A2,2 0 0,0 21,19V11H19M7.91,10.08L6.5,11.5L11,16L21,6L19.59,4.58L11,13.17L7.91,10.08Z"></path></svg>
<div class="t " style="top:518.93px;height:34px;line-height:34px;font-size:26px;color:#212121;-webkit-text-stroke:0.42px;left:96.33px;"><span style="letter-spacing: -0.249px; display: inline-block; transform: scaleX(0.9715); transform-origin: 0% 50%;">To-Dos</span></div>
<svg class="ic" style="left:24.5px;top:592.5999999999999px;width:44px;height:44px" viewBox="0 0 24 24"><path fill="#7d7d7d" d="M10 3h4v12h-4z M12 17a2 2 0 1 0 0 4a2 2 0 1 0 0-4z"></path></svg>
<div class="t " style="top:598.03px;height:34px;line-height:34px;font-size:26px;color:#212121;-webkit-text-stroke:0.42px;left:96.33px;"><span style="letter-spacing: -0.165px; display: inline-block; transform: scaleX(0.9794); transform-origin: 0% 50%;">Issues</span></div>
<svg class="ic" style="left:24.5px;top:671.6999999999999px;width:44px;height:44px" viewBox="0 0 24 24"><path fill="#7d7d7d" d="M20 2H4c-1.1 0-1.99.9-1.99 2L2 22l4-4h14c1.1 0 2-.9 2-2V4c0-1.1-.9-2-2-2zM8 14H6v-2h2v2zm0-3H6V9h2v2zm0-3H6V6h2v2zm7 6h-5v-2h5v2zm3-3h-8V9h8v2zm0-3h-8V6h8v2z"></path></svg>
<div class="t " style="top:677.13px;height:34px;line-height:34px;font-size:26px;color:#212121;-webkit-text-stroke:0.42px;left:96.33px;"><span style="letter-spacing: -0.085px; display: inline-block; transform: scaleX(0.9895); transform-origin: 0% 50%;">Meetings</span></div>
<svg class="ic" style="left:24.0px;top:750.3px;width:45px;height:45px" viewBox="0 0 45 45"><g fill="#7d7d7d"><rect x="13.5" y="6.700" width="6.300" height="4"></rect><rect x="25.300" y="6.700" width="6.300" height="4"></rect><path d="M13 12.700 h7.800 v16.500 h-2.300 v8.800 a1.700 1.700 0 0 1 -1.700 1.700 h-7.100 a1.700 1.700 0 0 1 -1.700 -1.700 v-6.500 c0 -6 3 -11.500 5 -18.800z"></path><path d="M32 12.700 h-7.800 v16.500 h2.300 v8.800 a1.700 1.700 0 0 0 1.700 1.700 h7.100 a1.700 1.700 0 0 0 1.700 -1.700 v-6.500 c0 -6 -3 -11.500 -5 -18.800z"></path><rect x="21.600" y="13.800" width="0.900" height="10"></rect><rect x="22.500" y="13.800" width="0.900" height="10" opacity="0"></rect></g></svg>
<div class="t " style="top:756.23px;height:34px;line-height:34px;font-size:26px;color:#212121;-webkit-text-stroke:0.42px;left:96.33px;"><span style="letter-spacing: -0.164px; display: inline-block; transform: scaleX(0.9847); transform-origin: 0% 50%;">V/TO</span></div>
<div class="t " style="top:759.05px;height:20px;line-height:20px;font-size:15px;color:#212121;left:155.32px;"><span>™</span></div>
<svg class="ic" style="left:24.0px;top:829.4px;width:45px;height:45px" viewBox="0 0 45 45"><g fill="#7d7d7d"><rect x="17.250" y="5.600" width="10.750" height="10.500"></rect><rect x="2.750" y="30.600" width="10.750" height="11.250"></rect><rect x="17.250" y="30.600" width="10.750" height="11.250"></rect><rect x="31.500" y="30.600" width="10.750" height="11.250"></rect><path d="M21.100 16h3v6h12.800a1.500 1.500 0 0 1 1.500 1.500v7.500h-3v-6h-11.300v6h-3v-6h-11.300v6h-3v-7.500a1.500 1.500 0 0 1 1.500-1.500h12.800z"></path></g></svg>
<div class="t " style="top:835.33px;height:34px;line-height:34px;font-size:26px;color:#212121;-webkit-text-stroke:0.42px;left:96.33px;"><span style="letter-spacing: -0.072px; display: inline-block; transform: scaleX(0.9889); transform-origin: 0% 50%;">Accountability Chart</span></div>
<svg class="ic" style="left:24.5px;top:909.0px;width:44px;height:44px" viewBox="0 0 24 24"><path fill="#7d7d7d" d="M21 6h-2v9H6v2c0 .55.45 1 1 1h11l4 4V7c0-.55-.45-1-1-1zm-4 6V3c0-.55-.45-1-1-1H3c-.55 0-1 .45-1 1v14l4-4h10c.55 0 1-.45 1-1z"></path></svg>
<div class="t " style="top:914.43px;height:34px;line-height:34px;font-size:26px;color:#212121;-webkit-text-stroke:0.42px;left:96.33px;"><span style="letter-spacing: -0.269px; display: inline-block; transform: scaleX(0.9688); transform-origin: 0% 50%;">Feedback</span></div>
<svg class="ic" style="left:24.5px;top:988.0999999999999px;width:44px;height:44px" viewBox="0 0 24 24"><path fill="#7d7d7d" d="M12 4V1L8 5l4 4V6c3.31 0 6 2.69 6 6 0 1.01-.25 1.97-.7 2.8l1.46 1.46C19.54 15.03 20 13.57 20 12c0-4.42-3.58-8-8-8zm0 14c-3.31 0-6-2.69-6-6 0-1.01.25-1.97.7-2.8L5.24 7.74C4.46 8.97 4 10.43 4 12c0 4.42 3.58 8 8 8v3l4-4-4-4v3z"></path></svg>
<div class="t " style="top:993.53px;height:34px;line-height:34px;font-size:26px;color:#212121;-webkit-text-stroke:0.42px;left:96.33px;"><span style="letter-spacing: -0.182px; display: inline-block; transform: scaleX(0.9781); transform-origin: 0% 50%;">Process</span></div>
<svg class="ic" style="left:24.5px;top:1067.1999999999998px;width:44px;height:44px" viewBox="0 0 24 24"><path fill="#7d7d7d" d="M20 0H4v2h16V0zM4 24h16v-2H4v2zM20 4H4c-1.1 0-2 .9-2 2v12c0 1.1.9 2 2 2h16c1.1 0 2-.9 2-2V6c0-1.1-.9-2-2-2zm-8 2.75c1.24 0 2.25 1.01 2.25 2.25s-1.01 2.25-2.25 2.25S9.75 10.24 9.75 9 10.76 6.75 12 6.75zM17 17H7v-1.5c0-1.67 3.33-2.5 5-2.5s5 .83 5 2.5V17z"></path></svg>
<div class="t " style="top:1072.63px;height:34px;line-height:34px;font-size:26px;color:#212121;-webkit-text-stroke:0.42px;left:96.33px;"><span style="letter-spacing: -0.141px; display: inline-block; transform: scaleX(0.9797); transform-origin: 0% 50%;">Directory</span></div>
<svg class="ic" style="left:24.5px;top:1274.0px;width:44px;height:44px" viewBox="0 0 24 24"><path fill="#7d7d7d" d="M20 2H4c-1.1 0-1.99.9-1.99 2L2 22l4-4h14c1.1 0 2-.9 2-2V4c0-1.1-.9-2-2-2zM6 14v-2.47l6.88-6.88c.2-.2.51-.2.71 0l1.77 1.77c.2.2.2.51 0 .71L8.47 14H6zm12 0h-7.5l2-2H18v2z"></path></svg>
<div class="t " style="top:1279.43px;height:34px;line-height:34px;font-size:26px;color:#212121;-webkit-text-stroke:0.42px;left:96.33px;"><span style="letter-spacing: -0.263px; display: inline-block; transform: scaleX(0.964); transform-origin: 0% 50%;">Provide Us Feedback</span></div>
<svg class="ic" style="left:24.5px;top:1353.75px;width:44px;height:44px" viewBox="0 0 24 24"><path fill="#7d7d7d" d="M19.14 12.94c.04-.3.06-.61.06-.94 0-.32-.02-.64-.07-.94l2.03-1.58c.18-.14.23-.41.12-.61l-1.92-3.32c-.12-.22-.37-.29-.59-.22l-2.39.96c-.5-.38-1.03-.7-1.62-.94l-.36-2.54c-.04-.24-.24-.41-.48-.41h-3.84c-.24 0-.43.17-.47.41l-.36 2.54c-.59.24-1.13.57-1.62.94l-2.39-.96c-.22-.08-.47 0-.59.22L2.74 8.87c-.12.21-.08.47.12.61l2.03 1.58c-.05.3-.09.63-.09.94s.02.64.07.94l-2.03 1.58c-.18.14-.23.41-.12.61l1.92 3.32c.12.22.37.29.59.22l2.39-.96c.5.38 1.03.7 1.62.94l.36 2.54c.05.24.24.41.48.41h3.84c.24 0 .44-.17.47-.41l.36-2.54c.59-.24 1.13-.56 1.62-.94l2.39.96c.22.08.47 0 .59-.22l1.92-3.32c.12-.22.07-.47-.12-.61l-2.01-1.58zM12 15.6c-1.98 0-3.6-1.62-3.6-3.6s1.62-3.6 3.6-3.6 3.6 1.62 3.6 3.6-1.62 3.6-3.6 3.6z"></path></svg>
<div class="t " style="top:1359.18px;height:34px;line-height:34px;font-size:26px;color:#212121;-webkit-text-stroke:0.42px;left:96.33px;"><span style="letter-spacing: -0.108px; display: inline-block; transform: scaleX(0.985); transform-origin: 0% 50%;">Settings</span></div>
<div class="b" style="left:0px;top:1414.5px;width:410px;height:2px;background:#dcdcdc;"></div>
<svg class="ic" style="left:24.5px;top:1434.5px;width:44px;height:44px" viewBox="0 0 24 24"><path fill="#8a8a8a" d="M3 18h13v-2H3v2zm0-5h10v-2H3v2zm0-7v2h13V6H3zm18 9.59L17.42 12 21 8.41 19.59 7l-5 5 5 5L21 15.59z"></path></svg>
<div class="t " style="top:1439.43px;height:34px;line-height:34px;font-size:26px;color:#8a8a8a;-webkit-text-stroke:0.42px;left:96.33px;"><span style="letter-spacing: -0.206px; display: inline-block; transform: scaleX(0.9731); transform-origin: 0% 50%;">Collapse</span></div>
<script>(function(){var w=window.innerWidth||2762;if(Math.abs(w-2762)>2){document.body.style.zoom=(w/2762);}})();</script>

</body></html>
